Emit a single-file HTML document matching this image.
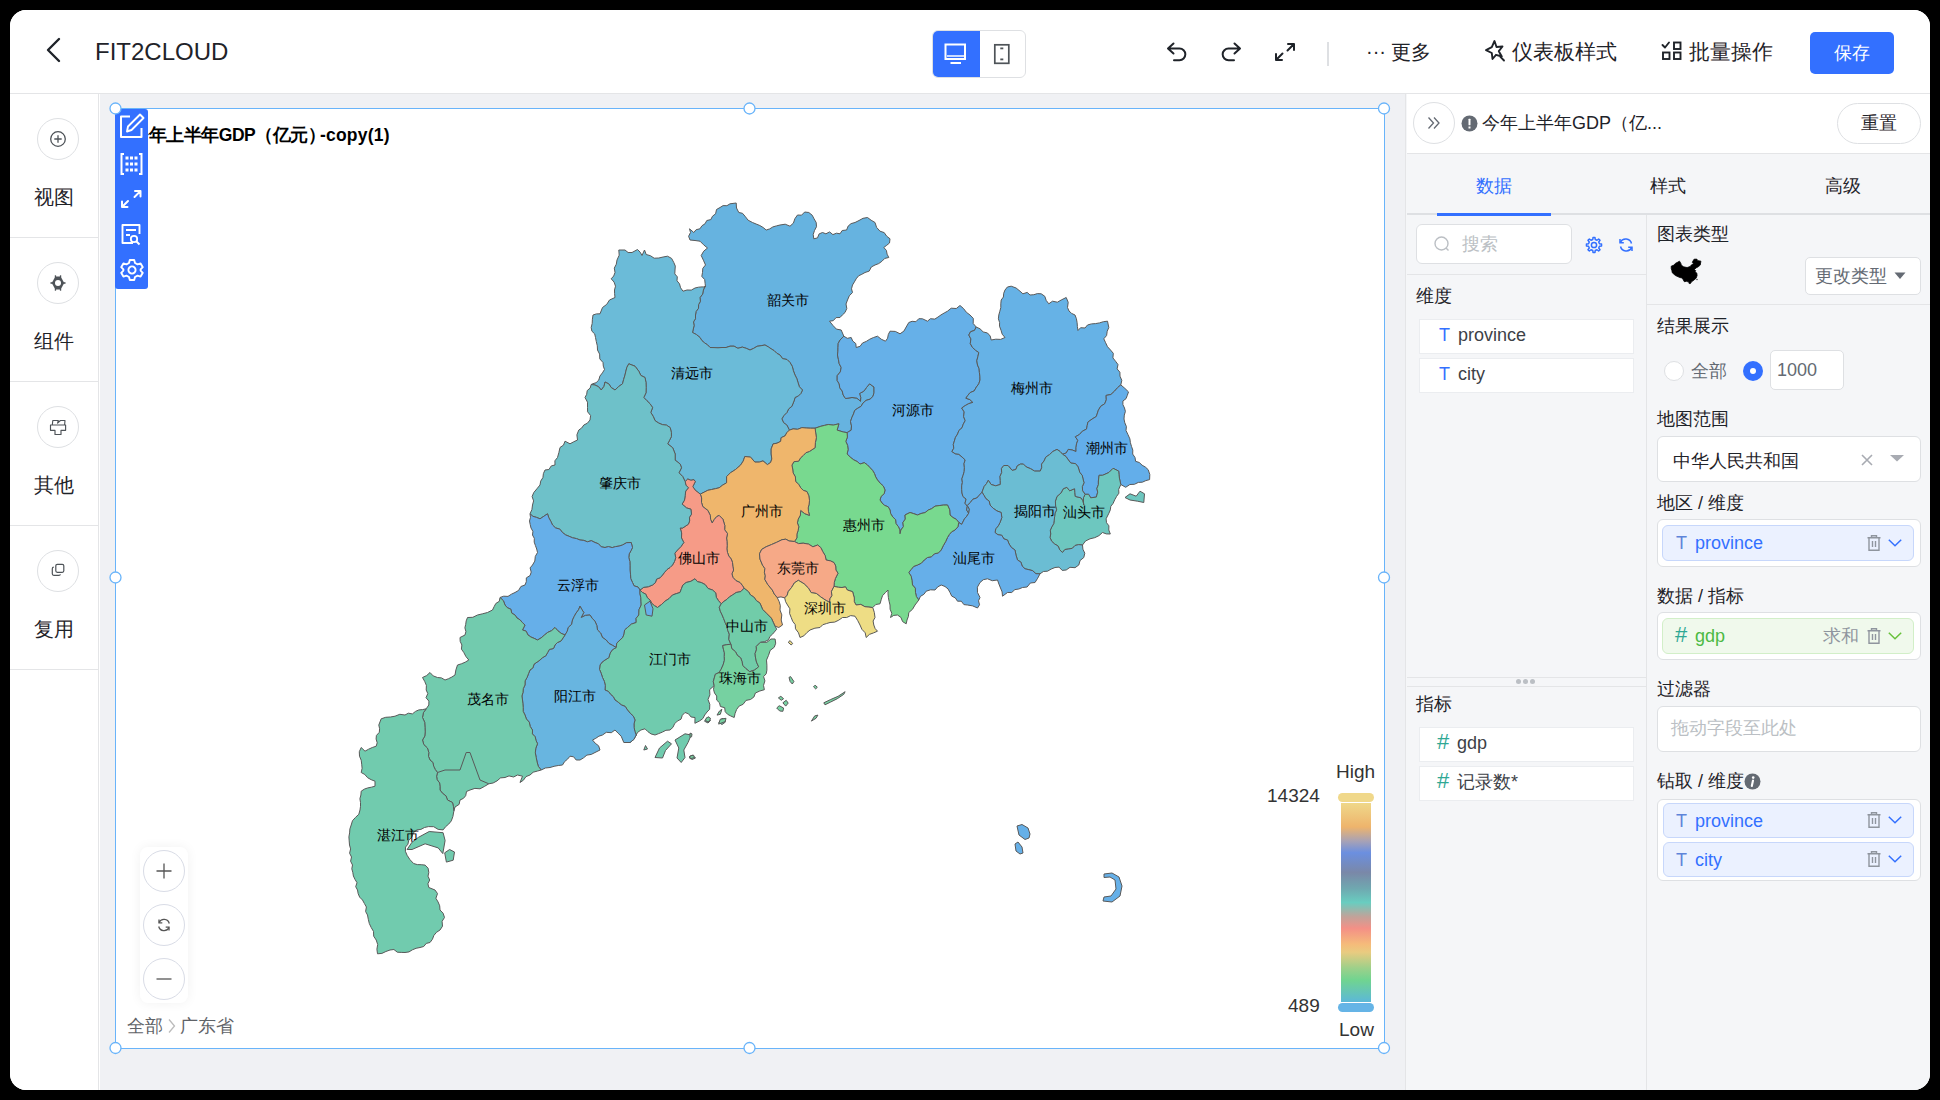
<!DOCTYPE html>
<html><head><meta charset="utf-8">
<style>
*{box-sizing:border-box;margin:0;padding:0}
html,body{width:1940px;height:1100px;background:#000;overflow:hidden;font-family:"Liberation Sans",sans-serif;color:#1f2329}
#app{position:absolute;left:10px;top:10px;width:1920px;height:1080px;background:#fff;border-radius:16px;overflow:hidden}
#in{position:absolute;left:-10px;top:-10px;width:1940px;height:1100px}
.a{position:absolute}
.t{position:absolute;white-space:nowrap;line-height:1}
.cir{position:absolute;border-radius:50%}
</style></head><body>
<div id="app"><div id="in">
<!-- HEADER -->
<div class="a" style="left:0;top:0;width:1940px;height:94px;background:#fff;border-bottom:1px solid #e4e5e7"></div>
<svg class="a" style="left:40px;top:32px" width="28" height="36" viewBox="0 0 28 36"><path d="M19 7 L8 18 L19 29" fill="none" stroke="#1f2329" stroke-width="2.4" stroke-linecap="round" stroke-linejoin="round"/></svg>
<div class="t" style="left:95px;top:40px;font-size:24px;color:#1f2329">FIT2CLOUD</div>
<div class="a" style="left:932px;top:30px;width:94px;height:48px;border:1px solid #dee0e3;border-radius:6px;overflow:hidden;background:#fff">
  <div class="a" style="left:-1px;top:-1px;width:48px;height:48px;background:#3370ff"></div>
</div>
<svg class="a" style="left:944px;top:43px" width="24" height="22" viewBox="0 0 24 22"><rect x="1.5" y="1.5" width="19.5" height="14.5" fill="none" stroke="#fff" stroke-width="2"/><line x1="3" y1="13" x2="20" y2="13" stroke="#fff" stroke-width="1.5"/><rect x="6.5" y="19" width="10.5" height="2" fill="#fff"/></svg>
<svg class="a" style="left:993px;top:43px" width="18" height="22" viewBox="0 0 18 22"><rect x="1.8" y="1.8" width="14" height="18.5" fill="none" stroke="#4e5358" stroke-width="1.7"/><rect x="7.3" y="4.5" width="3" height="1.8" fill="#4e5358"/><rect x="7.3" y="15.5" width="3" height="1.8" fill="#4e5358"/></svg>
<!-- undo redo fullscreen -->
<svg class="a" style="left:1164px;top:40px" width="26" height="24" viewBox="0 0 26 24"><path d="M9.5 3.5 L4 8.5 L9.5 13.5 M4.5 8.5 H15.5 A5.8 5.8 0 0 1 15.5 20.2 H10" fill="none" stroke="#1f2329" stroke-width="2" stroke-linecap="round" stroke-linejoin="round"/></svg>
<svg class="a" style="left:1218px;top:40px" width="26" height="24" viewBox="0 0 26 24"><path d="M16.5 3.5 L22 8.5 L16.5 13.5 M21.5 8.5 H10.5 A5.8 5.8 0 0 0 10.5 20.2 H16" fill="none" stroke="#1f2329" stroke-width="2" stroke-linecap="round" stroke-linejoin="round"/></svg>
<svg class="a" style="left:1272px;top:39px" width="26" height="26" viewBox="0 0 26 26"><path d="M16 5 H22 V11 M22 5 L15.5 11.5 M10 21 H4 V15 M4 21 L10.5 14.5" fill="none" stroke="#1f2329" stroke-width="2" stroke-linecap="round" stroke-linejoin="round"/></svg>
<div class="a" style="left:1327px;top:42px;width:1.5px;height:24px;background:#dee0e3"></div>
<div class="t" style="left:1366px;top:41px;font-size:20px;color:#1f2329">···</div>
<div class="t" style="left:1391px;top:42px;font-size:20px;color:#1f2329">更多</div>
<svg class="a" style="left:1482px;top:38px" width="26" height="26" viewBox="0 0 26 26"><path d="M12.5 3 L14.5 9 L20.5 8.5 L16.8 13.2 L19.8 18.5 L14 16.8 L10.5 21 L9.8 15 L4 12.2 L9.8 9.2 Z M17.5 17.8 L22 22.5" fill="none" stroke="#1f2329" stroke-width="1.9" stroke-linejoin="round" stroke-linecap="round"/></svg>
<div class="t" style="left:1512px;top:42px;font-size:20.5px;color:#1f2329">仪表板样式</div>
<svg class="a" style="left:1660px;top:40px" width="24" height="22" viewBox="0 0 24 22"><path d="M2.5 5 L5 7.5 L9 2.5" fill="none" stroke="#1f2329" stroke-width="1.9" stroke-linecap="round" stroke-linejoin="round"/><rect x="14" y="2.5" width="6.5" height="6.5" fill="none" stroke="#1f2329" stroke-width="1.9"/><rect x="3" y="12.5" width="6.5" height="6.5" fill="none" stroke="#1f2329" stroke-width="1.9"/><rect x="14" y="12.5" width="6.5" height="6.5" fill="none" stroke="#1f2329" stroke-width="1.9"/></svg>
<div class="t" style="left:1689px;top:42px;font-size:20.5px;color:#1f2329">批量操作</div>
<div class="a" style="left:1810px;top:32px;width:84px;height:42px;background:#3370ff;border-radius:5px"></div>
<div class="t" style="left:1834px;top:44px;font-size:18px;color:#fff">保存</div>

<!-- SIDEBAR -->
<div class="a" style="left:0;top:94px;width:99px;height:1006px;background:#fff;border-right:1px solid #e4e5e7"></div>
<div class="a" style="left:10px;top:237px;width:89px;height:1px;background:#e4e5e7"></div>
<div class="a" style="left:10px;top:381px;width:89px;height:1px;background:#e4e5e7"></div>
<div class="a" style="left:10px;top:525px;width:89px;height:1px;background:#e4e5e7"></div>
<div class="a" style="left:10px;top:669px;width:89px;height:1px;background:#e4e5e7"></div>
<div class="cir" style="left:37px;top:118px;width:42px;height:42px;border:1px solid #dee0e3"></div>
<div class="cir" style="left:37px;top:262px;width:42px;height:42px;border:1px solid #dee0e3"></div>
<div class="cir" style="left:37px;top:406px;width:42px;height:42px;border:1px solid #dee0e3"></div>
<div class="cir" style="left:37px;top:550px;width:42px;height:42px;border:1px solid #dee0e3"></div>
<svg class="a" style="left:48px;top:129px" width="20" height="20" viewBox="0 0 20 20"><circle cx="10" cy="10" r="7.3" fill="none" stroke="#4e5358" stroke-width="1.3"/><path d="M10 6.3 V13.7 M6.3 10 H13.7" stroke="#4e5358" stroke-width="1.3"/></svg>
<svg class="a" style="left:48px;top:273px" width="20" height="20" viewBox="0 0 20 20"><path d="M7.3 3.5 H12.7 L16.2 10 L12.7 16.5 H7.3 L3.8 10 Z" fill="#4e5358"/><circle cx="10" cy="10" r="3" fill="#fff"/><rect x="6.8" y="2.3" width="1.3" height="2" fill="#4e5358"/><rect x="11.9" y="2.3" width="1.3" height="2" fill="#4e5358"/><rect x="6.8" y="15.7" width="1.3" height="2" fill="#4e5358"/><rect x="11.9" y="15.7" width="1.3" height="2" fill="#4e5358"/><rect x="2.5" y="9.2" width="2" height="1.6" fill="#4e5358"/><rect x="15.5" y="9.2" width="2" height="1.6" fill="#4e5358"/></svg>
<svg class="a" style="left:48px;top:417px" width="20" height="20" viewBox="0 0 20 20"><path d="M4.3 8 L4.8 3.5 H10.3 L9.6 6.2 L12.4 3.5 H17 L16.6 8 M2.5 8 H17.6 V13.3 H13 V17.5 H7 V13.3 H2.5 Z" fill="none" stroke="#4e5358" stroke-width="1.15" stroke-linejoin="round"/></svg>
<svg class="a" style="left:48px;top:561px" width="20" height="20" viewBox="0 0 20 20"><rect x="7.8" y="3.3" width="8" height="8" rx="1.5" fill="none" stroke="#4e5358" stroke-width="1.2"/><path d="M5.8 6.2 Q4.3 6.2 4.3 7.8 V12.8 Q4.3 14.3 5.8 14.3 H10.8 Q12.3 14.3 12.3 13.2" fill="none" stroke="#4e5358" stroke-width="1.2"/></svg>
<div class="t" style="left:34px;top:187px;font-size:20px;color:#1f2329">视图</div>
<div class="t" style="left:34px;top:331px;font-size:20px;color:#1f2329">组件</div>
<div class="t" style="left:34px;top:475px;font-size:20px;color:#1f2329">其他</div>
<div class="t" style="left:34px;top:619px;font-size:20px;color:#1f2329">复用</div>

<!-- CANVAS -->
<div class="a" style="left:100px;top:94px;width:1306px;height:1006px;background:#f0f1f4"></div>
<div class="a" style="left:115px;top:108px;width:1270px;height:941px;background:#fff;border:1px solid #69b4fa"></div>
<svg class="a" style="left:0;top:0" width="1940" height="1100" viewBox="0 0 1940 1100">
<g stroke="#595959" stroke-width="1" stroke-linejoin="round">
<path fill="#66b3e0" d="M705.5 287.0 L705.1 283.3 L704.7 279.6 L701.8 276.4 L702.5 272.5 L702.8 268.3 L705.5 265.0 L703.4 260.2 L701.2 255.5 L703.7 251.2 L707.5 248.0 L703.6 244.8 L700.0 241.2 L695.0 240.5 L690.0 240.0 L688.6 236.3 L690.5 232.5 L689.5 228.8 L693.8 232.5 L696.1 229.7 L699.9 228.8 L702.0 225.7 L705.0 223.8 L706.8 220.5 L710.8 219.6 L712.5 216.2 L715.6 213.8 L716.5 209.5 L720.0 207.5 L723.1 205.6 L726.9 205.7 L730.0 203.8 L736.2 203.0 L736.5 208.0 L738.8 212.5 L742.5 213.3 L745.0 216.2 L748.1 220.2 L752.5 222.5 L756.1 224.0 L759.8 225.5 L763.2 227.5 L766.2 230.0 L769.7 228.9 L772.9 226.9 L776.4 225.9 L780.0 225.0 L785.2 224.2 L790.0 226.2 L793.4 223.1 L794.9 218.7 L797.5 215.0 L801.5 215.2 L804.7 212.0 L808.8 212.5 L812.2 215.2 L814.1 218.9 L816.2 222.5 L816.5 226.7 L814.5 230.5 L813.2 234.5 L813.8 238.8 L817.5 237.9 L819.1 233.9 L822.5 232.5 L825.9 233.8 L829.6 231.9 L832.9 234.6 L836.5 233.2 L840.0 233.8 L842.2 230.5 L846.6 230.0 L848.2 226.0 L851.1 223.6 L855.0 222.5 L859.0 220.5 L863.0 218.3 L867.5 217.5 L871.1 220.2 L875.0 222.5 L876.6 227.4 L880.0 231.2 L884.2 232.6 L886.7 236.2 L890.0 238.8 L889.5 243.0 L886.7 245.3 L883.8 247.5 L886.4 250.4 L887.1 254.2 L888.8 257.5 L884.8 258.4 L881.9 261.3 L878.7 263.6 L875.0 265.0 L871.3 267.0 L869.2 271.1 L865.0 272.5 L861.8 274.3 L858.6 275.8 L856.2 278.8 L854.4 281.9 L852.5 285.0 L851.5 288.8 L852.5 292.5 L849.3 295.8 L847.5 300.0 L846.0 304.0 L846.8 308.5 L845.0 312.5 L842.4 314.9 L840.0 317.5 L836.1 317.6 L833.2 320.7 L829.5 321.2 L833.0 325.5 L836.4 329.1 L841.2 330.0 L843.8 336.2 L840.0 340.0 L838.2 343.5 L838.0 347.4 L837.9 351.2 L837.5 355.0 L838.4 359.3 L839.2 363.6 L841.2 367.5 L840.3 371.9 L837.2 375.7 L837.2 380.5 L839.2 383.9 L839.8 387.9 L842.2 391.0 L843.2 395.0 L845.5 398.5 L852.0 397.5 L856.8 398.1 L860.5 401.2 L860.7 397.3 L859.5 393.5 L863.8 391.2 L866.6 387.4 L869.5 383.8 L874.0 387.0 L874.0 392.8 L872.9 396.5 L870.0 399.2 L866.1 400.4 L863.0 403.0 L861.1 406.3 L857.8 408.2 L854.7 410.4 L853.5 414.0 L852.0 417.2 L850.5 421.5 L851.5 425.9 L851.2 430.2 L847.1 432.6 L843.3 432.0 L837.1 430.1 L838.9 423.8 L833.3 425.1 L828.3 424.5 L824.5 425.4 L820.8 426.3 L815.1 428.2 L810.7 428.2 L806.3 428.0 L801.9 427.6 L797.7 429.3 L793.1 428.9 L789.4 430.1 L786.9 425.1 L783.5 422.6 L781.9 418.8 L784.0 415.4 L786.9 412.5 L788.7 408.8 L791.9 406.3 L794.4 400.0 L795.0 397.5 L798.4 395.9 L800.9 393.4 L802.5 390.0 L799.4 386.8 L798.1 382.8 L796.9 378.8 L795.0 375.0 L793.4 370.8 L792.3 366.4 L790.0 362.5 L787.0 359.5 L782.5 358.6 L780.0 355.0 L776.8 353.3 L774.2 350.7 L771.1 348.8 L768.2 346.8 L765.0 345.0 L761.1 345.7 L757.1 346.3 L753.6 348.4 L750.0 350.0 L746.2 348.3 L742.3 347.1 L737.9 348.3 L734.1 346.2 L730.0 346.2 L726.1 347.5 L722.0 347.5 L718.0 347.8 L714.0 347.6 L710.0 347.5 L707.6 344.9 L704.6 342.9 L701.9 340.6 L700.0 337.5 L696.5 334.6 L692.5 332.5 L693.3 329.0 L694.1 325.6 L693.5 321.9 L695.5 318.6 L695.5 315.0 L696.1 311.4 L698.5 308.3 L698.6 304.6 L700.4 301.3 L700.0 297.5 L702.6 294.2 L703.4 290.0 L705.0 286.2Z"/>
<path fill="#6bbbd8" d="M705.0 286.2 L703.4 290.0 L702.6 294.2 L700.0 297.5 L700.4 301.3 L698.6 304.6 L698.5 308.3 L696.1 311.4 L695.5 315.0 L695.5 318.6 L693.5 321.9 L694.1 325.6 L693.3 329.0 L692.5 332.5 L696.5 334.6 L700.0 337.5 L701.9 340.6 L704.6 342.9 L707.6 344.9 L710.0 347.5 L714.0 347.6 L718.0 347.8 L722.0 347.5 L726.1 347.5 L730.0 346.2 L734.1 346.2 L737.9 348.3 L742.3 347.1 L746.2 348.3 L750.0 350.0 L753.6 348.4 L757.1 346.3 L761.1 345.7 L765.0 345.0 L768.2 346.8 L771.1 348.8 L774.2 350.7 L776.8 353.3 L780.0 355.0 L782.5 358.6 L787.0 359.5 L790.0 362.5 L792.3 366.4 L793.4 370.8 L795.0 375.0 L796.9 378.8 L798.1 382.8 L799.4 386.8 L802.5 390.0 L800.9 393.4 L798.4 395.9 L795.0 397.5 L794.4 400.0 L791.9 406.3 L788.7 408.8 L786.9 412.5 L784.0 415.4 L781.9 418.8 L783.5 422.6 L786.9 425.1 L789.4 430.1 L786.9 432.6 L784.9 436.0 L781.2 437.6 L780.6 441.4 L777.0 443.2 L773.1 443.9 L771.2 448.9 L771.2 454.0 L771.8 459.0 L770.6 462.5 L767.4 464.6 L763.0 460.9 L759.3 462.1 L754.9 462.1 L750.5 457.1 L744.8 456.5 L743.2 461.1 L740.5 465.2 L735.4 469.6 L730.4 472.8 L726.6 476.5 L726.6 482.8 L722.7 485.1 L719.1 487.8 L715.4 488.7 L711.6 489.5 L707.8 490.3 L704.1 492.2 L700.3 494.1 L695.3 490.3 L692.8 486.6 L695.3 481.6 L694.0 479.7 L690.9 480.3 L687.8 479.0 L685.2 481.6 L682.7 476.5 L679.0 472.8 L681.5 467.8 L680.2 464.0 L675.2 460.2 L675.2 454.0 L672.7 447.7 L667.7 443.9 L669.6 440.2 L671.4 436.6 L671.4 432.6 L670.2 427.6 L666.4 425.1 L662.3 424.6 L658.6 423.0 L655.1 420.7 L653.2 416.3 L650.8 412.5 L652.6 407.6 L650.1 403.8 L646.9 400.7 L643.8 397.5 L646.0 392.8 L646.2 387.5 L646.0 382.5 L645.0 377.5 L640.8 375.4 L638.8 371.2 L635.0 366.2 L628.8 363.8 L626.9 367.3 L625.9 371.1 L625.0 375.0 L623.7 379.3 L622.5 383.8 L618.6 386.6 L615.0 390.0 L611.2 387.5 L608.8 383.9 L605.0 382.0 L604.0 386.4 L601.2 390.0 L598.7 386.8 L595.0 385.0 L591.2 384.5 L592.5 383.8 L596.1 382.7 L598.8 380.0 L599.9 376.1 L602.4 372.9 L604.5 369.5 L603.3 366.1 L603.0 362.5 L599.8 358.9 L599.6 354.1 L597.5 350.0 L597.3 345.8 L596.3 341.6 L595.5 337.5 L594.7 333.9 L591.9 331.2 L591.2 327.5 L592.2 323.4 L592.4 319.2 L593.0 315.0 L596.4 313.9 L600.0 313.8 L602.5 307.5 L606.7 304.4 L609.5 300.0 L615.0 297.5 L614.6 293.7 L614.5 290.0 L615.5 286.2 L614.1 282.1 L611.2 278.8 L613.7 276.0 L615.0 272.5 L614.3 268.1 L616.3 264.2 L617.0 260.0 L619.2 255.2 L618.8 250.0 L625.0 250.0 L628.1 252.5 L632.0 252.5 L637.5 249.5 L640.2 252.2 L642.0 255.5 L644.5 250.0 L646.2 254.5 L650.4 255.7 L654.2 258.2 L658.8 258.0 L663.1 257.0 L667.5 256.2 L671.6 258.4 L673.8 262.5 L675.3 266.1 L675.0 270.0 L674.8 273.9 L677.3 276.8 L677.0 280.8 L679.5 283.8 L680.6 287.8 L683.0 291.2 L687.0 290.0 L691.3 290.1 L695.0 288.0 L698.5 287.2 L702.0 286.9 L705.5 287.0Z"/>
<path fill="#66b0e8" d="M843.8 336.2 L847.3 338.3 L851.2 337.5 L852.7 341.0 L855.8 343.6 L856.2 347.5 L860.1 346.3 L862.5 343.0 L866.3 341.4 L869.8 339.2 L873.5 337.5 L877.5 336.2 L881.2 339.2 L885.5 341.2 L887.6 338.2 L888.3 334.5 L890.0 331.2 L895.3 331.4 L900.0 333.8 L903.9 331.1 L906.2 327.0 L908.8 322.5 L912.1 321.3 L915.9 321.7 L918.8 318.7 L922.5 318.8 L927.5 321.2 L930.4 318.7 L934.8 319.1 L937.9 317.1 L941.0 314.9 L944.2 313.0 L947.5 311.2 L951.2 308.2 L956.3 308.5 L960.0 305.5 L963.5 308.5 L966.3 312.2 L970.0 315.0 L973.3 318.4 L973.2 323.5 L976.2 327.0 L974.5 330.4 L970.6 331.7 L968.8 335.0 L970.9 338.9 L970.3 343.6 L972.5 347.5 L975.5 350.2 L978.8 352.5 L977.9 356.6 L976.8 360.7 L977.5 365.0 L979.1 368.6 L979.4 372.4 L979.9 376.2 L980.0 380.0 L978.8 383.8 L976.4 387.0 L974.2 390.9 L970.1 392.6 L967.9 395.3 L965.9 398.2 L969.9 399.6 L972.9 402.4 L968.8 403.6 L965.2 405.6 L961.7 408.0 L964.2 411.9 L963.6 416.6 L965.2 420.7 L963.3 424.1 L962.0 427.8 L958.9 430.5 L957.6 434.0 L955.5 437.3 L954.4 440.9 L953.3 444.5 L953.8 448.2 L951.9 451.5 L955.1 453.7 L958.9 454.3 L962.1 457.1 L965.2 459.9 L964.0 463.7 L964.4 467.7 L964.2 471.6 L963.1 475.3 L961.9 478.8 L962.4 482.4 L961.7 485.8 L961.7 489.4 L962.0 493.0 L962.9 496.4 L966.1 499.1 L965.0 503.2 L967.3 506.2 L966.6 510.0 L968.7 513.2 L966.8 516.2 L964.5 518.8 L961.7 524.4 L958.8 522.5 L956.4 519.4 L952.9 517.5 L950.0 515.0 L949.7 509.8 L947.5 505.0 L943.3 505.1 L939.1 505.6 L935.0 506.2 L931.8 508.6 L928.2 510.1 L925.1 512.6 L921.1 513.5 L917.5 515.0 L913.8 513.7 L910.0 512.5 L905.0 515.0 L905.3 519.1 L902.9 522.5 L903.4 526.6 L900.9 530.0 L900.0 533.8 L899.8 529.8 L898.3 526.5 L895.9 523.5 L895.6 519.6 L892.7 516.9 L890.7 513.7 L890.0 510.0 L888.2 506.8 L884.6 505.4 L882.0 503.0 L880.0 500.0 L881.1 496.4 L884.2 493.7 L885.0 490.0 L883.3 486.0 L880.2 483.2 L877.5 480.0 L875.7 476.9 L874.4 473.4 L872.5 470.3 L870.0 467.7 L867.5 465.0 L864.4 462.7 L860.1 464.0 L857.1 461.5 L853.8 459.9 L850.9 457.7 L847.1 454.0 L848.1 449.6 L847.6 445.4 L845.8 441.4 L847.4 437.1 L847.1 432.6 L851.2 430.2 L851.5 425.9 L850.5 421.5 L852.0 417.2 L853.5 414.0 L854.7 410.4 L857.8 408.2 L861.1 406.3 L863.0 403.0 L866.1 400.4 L870.0 399.2 L872.9 396.5 L874.0 392.8 L874.0 387.0 L869.5 383.8 L866.6 387.4 L863.8 391.2 L859.5 393.5 L860.7 397.3 L860.5 401.2 L856.8 398.1 L852.0 397.5 L845.5 398.5 L843.2 395.0 L842.2 391.0 L839.8 387.9 L839.2 383.9 L837.2 380.5 L837.2 375.7 L840.3 371.9 L841.2 367.5 L839.2 363.6 L838.4 359.3 L837.5 355.0 L837.9 351.2 L838.0 347.4 L838.2 343.5 L840.0 340.0 L843.8 336.2Z"/>
<path fill="#66b2e6" d="M976.2 327.0 L980.0 328.8 L983.2 331.9 L987.5 333.0 L990.2 336.0 L991.2 340.0 L995.8 339.2 L1000.6 339.4 L1005.0 337.5 L1002.2 334.2 L1001.0 330.2 L999.5 326.2 L999.6 322.5 L998.4 318.8 L998.8 315.0 L999.8 311.3 L1000.8 307.6 L1000.8 303.8 L1001.2 300.0 L1003.4 297.0 L1003.7 293.3 L1005.0 290.0 L1007.4 287.0 L1011.2 286.2 L1016.1 288.0 L1020.0 291.2 L1022.9 293.8 L1027.2 292.4 L1030.0 295.0 L1033.8 294.7 L1037.4 293.6 L1041.2 293.8 L1044.8 296.3 L1046.2 300.4 L1048.8 303.8 L1052.5 301.2 L1057.4 302.2 L1061.2 300.0 L1066.2 297.5 L1068.2 302.3 L1067.5 307.5 L1069.0 311.0 L1071.6 313.4 L1075.0 315.0 L1076.4 318.7 L1077.1 322.6 L1077.4 326.6 L1078.0 330.5 L1080.6 327.7 L1085.0 328.0 L1087.5 325.0 L1091.4 323.9 L1095.5 323.6 L1099.5 322.9 L1103.4 321.7 L1107.5 321.2 L1108.8 327.5 L1107.2 331.3 L1106.6 335.5 L1103.8 338.8 L1105.6 342.7 L1107.5 346.7 L1110.5 350.0 L1113.3 353.3 L1112.9 357.9 L1115.5 361.2 L1118.0 364.6 L1117.1 368.9 L1119.9 372.2 L1120.0 376.2 L1121.8 380.4 L1120.8 384.9 L1117.4 387.8 L1114.5 391.2 L1110.9 394.5 L1106.1 395.4 L1106.3 399.8 L1104.7 403.8 L1100.8 406.2 L1098.4 410.1 L1096.3 416.5 L1092.0 419.1 L1087.9 422.1 L1087.2 425.6 L1086.5 429.1 L1082.4 431.2 L1079.3 434.6 L1075.3 436.8 L1077.8 440.3 L1076.5 443.9 L1076.0 447.7 L1076.0 451.5 L1072.2 450.0 L1068.3 449.4 L1066.3 452.9 L1062.6 454.3 L1060.1 451.5 L1057.0 449.4 L1052.8 451.5 L1049.5 454.6 L1045.8 457.1 L1044.1 460.9 L1041.6 464.1 L1041.7 467.8 L1040.2 471.1 L1034.6 471.1 L1030.6 468.7 L1026.2 466.9 L1023.4 464.1 L1020.6 464.1 L1017.4 465.7 L1015.8 469.5 L1012.2 470.4 L1008.0 465.5 L1003.8 465.5 L1001.4 468.6 L1001.7 472.5 L1000.0 476.4 L1000.3 480.4 L1000.3 484.5 L995.7 485.8 L991.1 484.5 L988.3 480.3 L986.5 483.6 L984.1 486.6 L982.0 492.2 L979.4 495.1 L976.8 498.0 L972.9 499.2 L970.3 502.5 L967.3 505.5 L969.4 509.1 L968.7 513.2 L966.6 510.0 L967.3 506.2 L965.0 503.2 L966.1 499.1 L962.9 496.4 L962.0 493.0 L961.7 489.4 L961.7 485.8 L962.4 482.4 L961.9 478.8 L963.1 475.3 L964.2 471.6 L964.4 467.7 L964.0 463.7 L965.2 459.9 L962.1 457.1 L958.9 454.3 L955.1 453.7 L951.9 451.5 L953.8 448.2 L953.3 444.5 L954.4 440.9 L955.5 437.3 L957.6 434.0 L958.9 430.5 L962.0 427.8 L963.3 424.1 L965.2 420.7 L963.6 416.6 L964.2 411.9 L961.7 408.0 L965.2 405.6 L968.8 403.6 L972.9 402.4 L969.9 399.6 L965.9 398.2 L967.9 395.3 L970.1 392.6 L974.2 390.9 L976.4 387.0 L978.8 383.8 L980.0 380.0 L979.9 376.2 L979.4 372.4 L979.1 368.6 L977.5 365.0 L976.8 360.7 L977.9 356.6 L978.8 352.5 L975.5 350.2 L972.5 347.5 L970.3 343.6 L970.9 338.9 L968.8 335.0 L970.6 331.7 L974.5 330.4 L976.2 327.0Z"/>
<path fill="#63aeea" d="M1120.8 384.9 L1124.8 388.3 L1128.5 391.9 L1127.3 395.4 L1126.0 398.7 L1122.9 401.0 L1122.9 404.6 L1124.5 408.0 L1125.4 411.4 L1124.3 415.1 L1124.0 419.0 L1124.8 422.8 L1126.4 426.5 L1126.0 430.5 L1128.0 434.7 L1129.9 438.9 L1130.4 442.7 L1131.5 446.4 L1132.8 450.1 L1132.7 454.1 L1135.0 457.5 L1135.6 461.3 L1139.3 462.5 L1142.1 465.2 L1145.4 467.1 L1148.2 469.7 L1149.8 474.5 L1149.6 479.6 L1145.9 480.6 L1142.3 482.2 L1138.4 482.4 L1134.4 484.3 L1129.9 484.5 L1125.7 487.3 L1120.8 484.5 L1119.4 478.1 L1119.0 474.7 L1118.7 471.1 L1113.1 468.3 L1108.9 472.5 L1102.6 475.3 L1099.1 475.3 L1098.4 481.0 L1098.4 484.7 L1096.9 488.4 L1097.7 492.2 L1096.3 497.1 L1090.7 497.8 L1088.6 494.3 L1085.1 494.3 L1082.6 490.8 L1082.3 486.6 L1084.0 482.8 L1083.0 478.9 L1082.2 475.3 L1079.8 472.5 L1078.1 466.9 L1075.5 463.6 L1070.9 463.1 L1068.3 459.9 L1066.0 456.5 L1062.6 454.3 L1066.3 452.9 L1068.3 449.4 L1072.2 450.0 L1076.0 451.5 L1076.0 447.7 L1076.5 443.9 L1077.8 440.3 L1075.3 436.8 L1079.3 434.6 L1082.4 431.2 L1086.5 429.1 L1087.2 425.6 L1087.9 422.1 L1092.0 419.1 L1096.3 416.5 L1098.4 410.1 L1100.8 406.2 L1104.7 403.8 L1106.3 399.8 L1106.1 395.4 L1110.9 394.5 L1114.5 391.2 L1117.4 387.8 L1120.8 384.9Z"/>
<path fill="#6dc7bf" d="M1120.8 484.5 L1118.7 489.4 L1118.9 493.2 L1116.6 496.4 L1114.7 499.8 L1113.1 503.4 L1110.8 506.3 L1110.3 509.9 L1108.9 513.2 L1106.1 518.8 L1106.5 522.7 L1108.9 525.8 L1108.8 530.0 L1110.3 534.0 L1106.3 533.9 L1102.5 532.5 L1098.9 535.7 L1094.7 537.7 L1090.0 538.8 L1085.5 541.0 L1082.5 545.0 L1078.7 544.6 L1075.0 545.5 L1072.4 548.3 L1068.7 549.0 L1064.9 549.5 L1062.5 552.5 L1059.7 549.8 L1058.1 546.0 L1054.5 543.9 L1051.6 541.2 L1050.0 537.5 L1050.7 534.0 L1050.3 530.2 L1051.8 526.9 L1053.7 523.7 L1054.2 520.2 L1054.6 516.7 L1055.0 513.2 L1056.6 509.8 L1055.6 506.2 L1055.4 501.1 L1057.0 496.4 L1060.9 493.1 L1063.3 488.7 L1066.9 487.3 L1069.7 490.8 L1074.6 488.7 L1074.9 492.5 L1075.3 496.4 L1080.9 497.8 L1083.2 500.9 L1083.7 504.8 L1083.3 501.2 L1083.5 497.6 L1085.1 494.3 L1088.6 494.3 L1090.7 497.8 L1096.3 497.1 L1097.7 492.2 L1096.9 488.4 L1098.4 484.7 L1098.4 481.0 L1099.1 475.3 L1102.6 475.3 L1108.9 472.5 L1113.1 468.3 L1118.7 471.1 L1119.0 474.7 L1119.4 478.1 L1120.8 484.5Z"/>
<path fill="#6bbdd3" d="M982.0 492.2 L984.1 486.6 L986.5 483.6 L988.3 480.3 L991.1 484.5 L995.7 485.8 L1000.3 484.5 L1000.3 480.4 L1000.0 476.4 L1001.7 472.5 L1001.4 468.6 L1003.8 465.5 L1008.0 465.5 L1012.2 470.4 L1015.8 469.5 L1017.4 465.7 L1020.6 464.1 L1023.4 464.1 L1026.2 466.9 L1030.6 468.7 L1034.6 471.1 L1040.2 471.1 L1041.7 467.8 L1041.6 464.1 L1044.1 460.9 L1045.8 457.1 L1049.5 454.6 L1052.8 451.5 L1057.0 449.4 L1060.1 451.5 L1062.6 454.3 L1066.0 456.5 L1068.3 459.9 L1070.9 463.1 L1075.5 463.6 L1078.1 466.9 L1079.8 472.5 L1082.2 475.3 L1083.0 478.9 L1084.0 482.8 L1082.3 486.6 L1082.6 490.8 L1085.1 494.3 L1083.5 497.6 L1083.3 501.2 L1083.7 504.8 L1083.2 500.9 L1080.9 497.8 L1075.3 496.4 L1074.9 492.5 L1074.6 488.7 L1069.7 490.8 L1066.9 487.3 L1063.3 488.7 L1060.9 493.1 L1057.0 496.4 L1055.4 501.1 L1055.6 506.2 L1056.6 509.8 L1055.0 513.2 L1054.6 516.7 L1054.2 520.2 L1053.7 523.7 L1051.8 526.9 L1050.3 530.2 L1050.7 534.0 L1050.0 537.5 L1051.6 541.2 L1054.5 543.9 L1058.1 546.0 L1059.7 549.8 L1062.5 552.5 L1064.9 549.5 L1068.7 549.0 L1072.4 548.3 L1075.0 545.5 L1078.7 544.6 L1082.5 545.0 L1082.9 549.2 L1084.8 553.2 L1083.8 557.5 L1080.1 560.5 L1078.8 565.0 L1075.0 567.7 L1070.0 567.3 L1066.2 570.0 L1062.2 570.4 L1059.0 567.1 L1055.0 567.5 L1051.1 569.1 L1047.5 571.2 L1043.4 571.5 L1040.0 573.8 L1035.9 573.7 L1032.7 570.7 L1028.9 569.7 L1025.0 568.8 L1022.2 566.1 L1020.9 562.1 L1017.5 560.0 L1016.0 555.1 L1015.0 550.0 L1011.4 547.5 L1009.1 544.0 L1007.5 540.0 L1003.9 538.9 L1001.8 535.3 L997.9 534.7 L995.0 532.5 L995.8 528.7 L998.3 525.8 L1000.0 522.5 L1001.8 517.6 L1001.2 512.5 L996.9 510.9 L993.2 508.3 L990.0 505.0 L989.2 501.1 L985.9 498.7 L984.0 495.4 L982.0 492.2Z"/>
<path fill="#66afe9" d="M958.8 522.5 L961.7 524.4 L964.5 518.8 L966.8 516.2 L968.7 513.2 L969.4 509.1 L967.3 505.5 L970.3 502.5 L972.9 499.2 L976.8 498.0 L979.4 495.1 L982.0 492.2 L984.0 495.4 L985.9 498.7 L989.2 501.1 L990.0 505.0 L993.2 508.3 L996.9 510.9 L1001.2 512.5 L1001.8 517.6 L1000.0 522.5 L998.3 525.8 L995.8 528.7 L995.0 532.5 L997.9 534.7 L1001.8 535.3 L1003.9 538.9 L1007.5 540.0 L1009.1 544.0 L1011.4 547.5 L1015.0 550.0 L1016.0 555.1 L1017.5 560.0 L1020.9 562.1 L1022.2 566.1 L1025.0 568.8 L1028.9 569.7 L1032.7 570.7 L1035.9 573.7 L1040.0 573.8 L1037.7 578.2 L1035.0 582.5 L1030.4 583.0 L1027.1 587.0 L1022.5 587.5 L1018.8 589.0 L1014.9 589.6 L1011.7 592.5 L1007.5 592.5 L1002.5 596.2 L1002.1 591.9 L1000.5 588.0 L998.9 584.0 L997.5 580.0 L992.3 580.7 L987.5 578.8 L983.3 579.7 L980.0 582.5 L977.4 587.2 L977.5 592.5 L980.0 597.5 L978.5 600.8 L979.5 604.8 L977.5 608.0 L972.7 605.9 L967.5 605.0 L963.9 604.6 L961.3 601.2 L957.5 601.2 L955.4 598.0 L951.7 596.1 L950.0 592.5 L948.0 588.9 L945.0 586.5 L941.2 585.0 L937.7 586.9 L935.0 590.0 L930.5 589.8 L926.2 591.2 L923.9 594.3 L920.4 596.4 L918.8 600.0 L916.4 596.6 L915.5 592.6 L915.3 588.2 L912.5 585.0 L912.0 580.6 L911.2 576.3 L908.8 572.5 L911.2 569.4 L913.7 566.4 L917.5 565.0 L921.3 563.2 L924.2 560.0 L927.5 557.5 L931.5 556.7 L934.4 553.8 L938.4 552.9 L941.2 550.0 L943.2 545.8 L945.6 541.7 L947.5 537.5 L949.4 534.4 L951.7 531.7 L955.0 530.0 L957.9 526.8 L958.8 522.5Z"/>
<path fill="#78d98f" d="M815.1 428.2 L820.8 426.3 L824.5 425.4 L828.3 424.5 L833.3 425.1 L838.9 423.8 L837.1 430.1 L843.3 432.0 L847.1 432.6 L847.4 437.1 L845.8 441.4 L847.6 445.4 L848.1 449.6 L847.1 454.0 L850.9 457.7 L853.8 459.9 L857.1 461.5 L860.1 464.0 L864.4 462.7 L867.5 465.0 L870.0 467.7 L872.5 470.3 L874.4 473.4 L875.7 476.9 L877.5 480.0 L880.2 483.2 L883.3 486.0 L885.0 490.0 L884.2 493.7 L881.1 496.4 L880.0 500.0 L882.0 503.0 L884.6 505.4 L888.2 506.8 L890.0 510.0 L890.7 513.7 L892.7 516.9 L895.6 519.6 L895.9 523.5 L898.3 526.5 L899.8 529.8 L900.0 533.8 L900.9 530.0 L903.4 526.6 L902.9 522.5 L905.3 519.1 L905.0 515.0 L910.0 512.5 L913.8 513.7 L917.5 515.0 L921.1 513.5 L925.1 512.6 L928.2 510.1 L931.8 508.6 L935.0 506.2 L939.1 505.6 L943.3 505.1 L947.5 505.0 L949.7 509.8 L950.0 515.0 L952.9 517.5 L956.4 519.4 L958.8 522.5 L957.9 526.8 L955.0 530.0 L951.7 531.7 L949.4 534.4 L947.5 537.5 L945.6 541.7 L943.2 545.8 L941.2 550.0 L938.4 552.9 L934.4 553.8 L931.5 556.7 L927.5 557.5 L924.2 560.0 L921.3 563.2 L917.5 565.0 L913.7 566.4 L911.2 569.4 L908.8 572.5 L911.2 576.3 L912.0 580.6 L912.5 585.0 L915.3 588.2 L915.5 592.6 L916.4 596.6 L918.8 600.0 L915.0 605.0 L912.5 609.3 L908.8 612.5 L908.4 616.4 L907.0 620.0 L906.2 623.8 L902.6 621.6 L900.9 617.4 L897.5 615.0 L893.7 615.4 L890.5 617.5 L891.8 613.3 L890.1 609.2 L890.0 605.0 L889.1 601.3 L888.4 597.6 L888.0 593.8 L888.0 590.0 L885.5 592.5 L882.5 595.7 L881.2 599.7 L880.0 603.8 L875.8 604.5 L872.8 607.5 L868.9 607.1 L864.9 606.7 L860.8 604.4 L856.1 605.0 L854.3 601.7 L854.3 597.9 L852.6 591.7 L847.3 590.0 L845.5 586.9 L842.0 587.5 L838.5 587.3 L834.0 586.4 L834.3 582.4 L835.4 578.5 L838.0 573.2 L835.9 570.0 L835.7 566.0 L834.0 562.6 L830.5 560.9 L826.1 560.0 L825.2 555.6 L822.8 551.7 L820.8 547.6 L817.7 545.0 L812.9 546.8 L808.5 544.1 L803.2 543.2 L798.5 543.6 L794.4 541.5 L796.9 538.0 L796.9 534.2 L798.1 530.5 L798.8 526.8 L797.4 522.9 L798.2 519.2 L800.4 515.1 L800.7 510.4 L804.7 513.6 L809.5 515.4 L808.5 511.7 L808.2 507.9 L809.1 504.2 L809.5 500.4 L808.8 495.8 L807.0 491.6 L803.4 490.4 L800.7 487.8 L798.7 484.3 L795.7 481.6 L795.4 476.9 L793.1 472.8 L792.7 469.0 L791.9 465.2 L793.9 461.7 L798.6 461.2 L800.7 457.7 L803.4 455.4 L805.9 452.7 L809.5 451.4 L815.1 447.7 L815.4 442.6 L816.4 437.6 L815.7 432.9 L815.1 428.2Z"/>
<path fill="#efb66c" d="M789.4 430.1 L793.1 428.9 L797.7 429.3 L801.9 427.6 L806.3 428.0 L810.7 428.2 L815.1 428.2 L815.7 432.9 L816.4 437.6 L815.4 442.6 L815.1 447.7 L809.5 451.4 L805.9 452.7 L803.4 455.4 L800.7 457.7 L798.6 461.2 L793.9 461.7 L791.9 465.2 L792.7 469.0 L793.1 472.8 L795.4 476.9 L795.7 481.6 L798.7 484.3 L800.7 487.8 L803.4 490.4 L807.0 491.6 L808.8 495.8 L809.5 500.4 L809.1 504.2 L808.2 507.9 L808.5 511.7 L809.5 515.4 L804.7 513.6 L800.7 510.4 L800.4 515.1 L798.2 519.2 L797.4 522.9 L798.8 526.8 L798.1 530.5 L796.9 534.2 L796.9 538.0 L794.4 541.5 L789.1 541.0 L785.8 539.2 L782.0 539.7 L776.7 542.3 L771.4 544.6 L766.1 546.8 L761.7 549.4 L759.5 553.8 L760.0 559.1 L762.6 565.3 L764.9 568.5 L764.4 572.3 L765.3 575.8 L764.8 579.4 L767.9 584.7 L772.3 590.0 L774.3 594.0 L777.2 597.5 L779.1 601.4 L780.3 605.5 L780.0 610.0 L781.8 614.9 L781.2 620.0 L782.5 625.0 L778.8 627.5 L775.0 626.2 L773.2 622.2 L771.4 618.2 L767.0 613.8 L762.6 609.4 L760.0 603.2 L756.4 600.6 L753.8 597.0 L750.5 595.0 L748.5 591.7 L744.1 588.2 L742.2 585.2 L740.0 582.5 L736.0 580.7 L733.0 577.5 L731.9 573.8 L733.6 570.0 L732.8 566.2 L732.5 562.5 L731.2 559.0 L728.8 556.0 L727.5 552.5 L726.9 548.9 L727.2 545.3 L727.0 541.6 L726.6 538.0 L727.5 533.6 L724.7 529.8 L724.8 525.5 L722.9 519.2 L719.1 515.4 L716.6 516.7 L714.2 519.6 L712.2 523.0 L710.6 519.4 L710.3 515.4 L707.8 510.4 L702.8 506.6 L701.5 502.4 L701.6 497.9 L700.3 494.1 L704.1 492.2 L707.8 490.3 L711.6 489.5 L715.4 488.7 L719.1 487.8 L722.7 485.1 L726.6 482.8 L726.6 476.5 L730.4 472.8 L735.4 469.6 L740.5 465.2 L743.2 461.1 L744.8 456.5 L750.5 457.1 L754.9 462.1 L759.3 462.1 L763.0 460.9 L767.4 464.6 L770.6 462.5 L771.8 459.0 L771.2 454.0 L771.2 448.9 L773.1 443.9 L777.0 443.2 L780.6 441.4 L781.2 437.6 L784.9 436.0 L786.9 432.6 L789.4 430.1Z"/>
<path fill="#f6a987" d="M777.2 597.5 L774.3 594.0 L772.3 590.0 L767.9 584.7 L764.8 579.4 L765.3 575.8 L764.4 572.3 L764.9 568.5 L762.6 565.3 L760.0 559.1 L759.5 553.8 L761.7 549.4 L766.1 546.8 L771.4 544.6 L776.7 542.3 L782.0 539.7 L785.8 539.2 L789.1 541.0 L794.4 541.5 L798.5 543.6 L803.2 543.2 L808.5 544.1 L812.9 546.8 L817.7 545.0 L820.8 547.6 L822.8 551.7 L825.2 555.6 L826.1 560.0 L830.5 560.9 L834.0 562.6 L835.7 566.0 L835.9 570.0 L838.0 573.2 L835.4 578.5 L834.3 582.4 L834.0 586.4 L831.4 591.7 L832.0 595.5 L830.0 598.7 L829.6 602.3 L826.1 600.5 L820.8 597.0 L816.4 593.5 L811.1 592.6 L808.5 588.2 L804.1 583.8 L798.3 580.3 L794.4 582.9 L791.7 587.3 L788.2 591.7 L787.2 595.2 L784.7 597.9 L781.0 596.9 L777.2 597.5Z"/>
<path fill="#eedd85" d="M784.7 597.9 L787.2 595.2 L788.2 591.7 L791.7 587.3 L794.4 582.9 L798.3 580.3 L804.1 583.8 L808.5 588.2 L811.1 592.6 L816.4 593.5 L820.8 597.0 L826.1 600.5 L829.6 602.3 L830.0 598.7 L832.0 595.5 L831.4 591.7 L834.0 586.4 L838.5 587.3 L842.0 587.5 L845.5 586.9 L847.3 590.0 L852.6 591.7 L854.3 597.9 L854.3 601.7 L856.1 605.0 L860.8 604.4 L864.9 606.7 L868.9 607.1 L872.8 607.6 L874.3 612.4 L875.0 617.5 L873.1 621.0 L873.8 625.0 L875.1 628.5 L877.5 631.2 L873.5 632.9 L869.4 634.4 L866.2 637.5 L865.2 632.8 L861.9 629.3 L860.0 625.0 L857.7 620.5 L855.0 616.2 L850.7 615.6 L846.7 617.5 L842.5 617.5 L838.7 620.2 L834.7 622.1 L830.0 622.5 L826.4 623.6 L822.8 624.7 L820.0 627.5 L814.9 628.2 L810.0 630.0 L806.8 632.7 L803.9 635.8 L800.0 637.5 L798.5 632.8 L795.5 628.8 L795.2 624.6 L792.7 621.3 L791.2 617.5 L789.6 613.5 L789.9 608.8 L787.5 605.0 L785.6 601.7 L784.7 597.9Z"/>
<path fill="#f69b87" d="M685.2 481.6 L687.8 479.0 L690.9 480.3 L694.0 479.7 L695.3 481.6 L692.8 486.6 L695.3 490.3 L700.3 494.1 L701.6 497.9 L701.5 502.4 L702.8 506.6 L707.8 510.4 L710.3 515.4 L710.6 519.4 L712.2 523.0 L714.2 519.6 L716.6 516.7 L719.1 515.4 L722.9 519.2 L724.8 525.5 L724.7 529.8 L727.5 533.6 L726.6 538.0 L727.0 541.6 L727.2 545.3 L726.9 548.9 L727.5 552.5 L728.8 556.0 L731.2 559.0 L732.5 562.5 L732.8 566.2 L733.6 570.0 L731.9 573.8 L733.0 577.5 L736.0 580.7 L740.0 582.5 L742.2 585.2 L744.1 588.2 L740.9 591.6 L736.2 592.5 L732.5 595.0 L729.4 596.9 L726.9 599.4 L723.9 601.4 L721.2 603.8 L718.5 600.7 L716.3 597.3 L715.7 592.8 L712.5 590.0 L708.1 588.5 L705.2 584.6 L701.2 582.5 L697.5 581.7 L695.0 578.8 L690.9 581.3 L686.2 582.5 L682.9 585.0 L681.4 588.8 L680.0 592.5 L676.2 593.7 L672.5 595.0 L669.1 598.6 L665.0 601.2 L661.4 604.6 L657.5 607.5 L654.4 605.6 L651.7 603.3 L650.0 600.0 L647.3 597.7 L645.8 594.2 L642.5 592.5 L640.0 590.0 L643.8 587.3 L648.4 586.7 L652.5 585.0 L655.3 582.8 L656.6 579.1 L660.2 577.7 L662.5 575.0 L664.7 572.2 L667.0 569.5 L670.0 567.5 L672.5 565.0 L674.5 561.5 L675.7 557.7 L674.8 553.3 L677.5 550.0 L681.0 546.5 L683.8 542.5 L681.5 538.0 L681.6 532.9 L680.2 528.0 L682.7 528.0 L688.4 524.2 L689.6 520.9 L689.5 517.2 L691.5 514.2 L690.9 509.2 L686.5 507.9 L682.1 504.1 L684.5 500.1 L685.2 495.4 L685.7 491.1 L688.4 487.8 L685.9 485.1 L685.2 481.6Z"/>
<path fill="#6ec1c9" d="M591.2 384.5 L595.0 385.0 L598.7 386.8 L601.2 390.0 L604.0 386.4 L605.0 382.0 L608.8 383.9 L611.2 387.5 L615.0 390.0 L618.6 386.6 L622.5 383.8 L623.7 379.3 L625.0 375.0 L625.9 371.1 L626.9 367.3 L628.8 363.8 L635.0 366.2 L638.8 371.2 L640.8 375.4 L645.0 377.5 L646.0 382.5 L646.2 387.5 L646.0 392.8 L643.8 397.5 L646.9 400.7 L650.1 403.8 L652.6 407.6 L650.8 412.5 L653.2 416.3 L655.1 420.7 L658.6 423.0 L662.3 424.6 L666.4 425.1 L670.2 427.6 L671.4 432.6 L671.4 436.6 L669.6 440.2 L667.7 443.9 L672.7 447.7 L675.2 454.0 L675.2 460.2 L680.2 464.0 L681.5 467.8 L679.0 472.8 L682.7 476.5 L685.2 481.6 L685.9 485.1 L688.4 487.8 L685.7 491.1 L685.2 495.4 L684.5 500.1 L682.1 504.1 L686.5 507.9 L690.9 509.2 L691.5 514.2 L689.5 517.2 L689.6 520.9 L688.4 524.2 L682.7 528.0 L680.2 528.0 L681.6 532.9 L681.5 538.0 L683.8 542.5 L681.0 546.5 L677.5 550.0 L674.8 553.3 L675.7 557.7 L674.5 561.5 L672.5 565.0 L670.0 567.5 L667.0 569.5 L664.7 572.2 L662.5 575.0 L660.2 577.7 L656.6 579.1 L655.3 582.8 L652.5 585.0 L648.4 586.7 L643.8 587.3 L640.0 590.0 L638.0 587.0 L634.1 585.9 L632.5 582.5 L630.7 578.5 L630.5 574.2 L630.0 570.0 L630.0 565.8 L629.9 561.6 L628.8 557.5 L629.2 553.9 L631.0 550.7 L632.5 547.5 L631.2 542.5 L626.6 542.7 L622.5 545.0 L619.1 546.1 L615.6 546.6 L612.2 547.6 L608.4 546.6 L605.0 547.5 L601.2 546.8 L598.5 543.8 L595.0 542.5 L591.4 540.7 L587.4 541.8 L583.8 540.4 L580.0 540.0 L576.5 538.6 L572.6 537.8 L569.1 536.3 L565.6 534.9 L562.5 532.5 L559.8 529.1 L555.5 527.9 L552.5 525.0 L550.8 521.3 L548.8 517.7 L547.5 513.8 L543.8 516.3 L540.0 518.8 L536.5 517.4 L532.9 516.3 L530.0 513.8 L531.9 509.6 L532.5 505.0 L533.6 500.9 L532.1 496.5 L533.8 492.5 L536.9 488.8 L540.0 485.0 L540.7 481.1 L542.9 477.6 L543.4 473.6 L545.0 470.0 L548.9 469.5 L551.3 465.9 L555.0 465.0 L554.9 460.8 L557.5 457.5 L558.9 452.5 L560.0 447.5 L563.5 445.1 L565.0 441.2 L570.0 443.8 L573.7 441.8 L577.5 440.0 L576.9 434.8 L578.8 430.0 L581.7 428.0 L583.8 425.0 L587.4 423.2 L590.0 420.0 L590.6 415.5 L587.6 411.8 L587.5 407.5 L587.5 402.2 L585.0 397.5 L586.7 394.3 L587.2 390.6 L590.2 388.0 L591.2 384.5Z"/>
<path fill="#66afe9" d="M530.0 513.8 L532.9 516.3 L536.5 517.4 L540.0 518.8 L543.8 516.3 L547.5 513.8 L548.8 517.7 L550.8 521.3 L552.5 525.0 L555.5 527.9 L559.8 529.1 L562.5 532.5 L565.6 534.9 L569.1 536.3 L572.6 537.8 L576.5 538.6 L580.0 540.0 L583.8 540.4 L587.4 541.8 L591.4 540.7 L595.0 542.5 L598.5 543.8 L601.2 546.8 L605.0 547.5 L608.4 546.6 L612.2 547.6 L615.6 546.6 L619.1 546.1 L622.5 545.0 L626.6 542.7 L631.2 542.5 L632.5 547.5 L631.0 550.7 L629.2 553.9 L628.8 557.5 L629.9 561.6 L630.0 565.8 L630.0 570.0 L630.5 574.2 L630.7 578.5 L632.5 582.5 L634.1 585.9 L638.0 587.0 L640.0 590.0 L640.0 593.8 L640.8 597.5 L641.0 601.2 L641.2 605.0 L639.0 609.7 L638.8 615.0 L636.1 618.3 L636.2 622.5 L631.4 624.1 L627.5 627.5 L624.6 630.0 L624.1 633.9 L622.8 637.4 L620.0 640.0 L616.8 643.1 L616.2 647.5 L612.6 645.4 L608.9 643.4 L606.2 640.0 L602.4 637.4 L600.7 633.1 L597.5 630.0 L596.8 625.5 L595.0 621.2 L592.2 618.4 L590.0 615.0 L585.4 615.4 L581.2 617.5 L583.8 612.5 L581.8 609.4 L580.0 606.2 L578.5 609.9 L576.1 613.0 L574.2 616.5 L572.5 620.0 L571.7 624.3 L568.4 627.3 L567.2 631.4 L565.0 635.0 L561.1 633.3 L557.8 630.7 L555.0 627.5 L551.7 630.6 L547.5 632.5 L544.3 635.2 L541.1 637.9 L537.5 640.0 L534.2 638.4 L530.9 637.0 L527.9 634.9 L526.1 631.1 L522.5 630.0 L525.0 625.0 L522.4 622.6 L520.1 619.9 L517.0 618.0 L515.0 615.0 L511.8 613.2 L510.8 609.2 L507.3 607.7 L505.0 605.0 L503.4 600.7 L500.0 597.5 L503.7 596.2 L508.0 596.4 L511.4 594.2 L515.0 592.5 L518.6 590.4 L520.9 586.5 L525.0 585.0 L526.3 581.7 L526.3 577.9 L530.1 575.5 L531.2 572.1 L530.1 567.9 L532.5 565.0 L534.8 561.1 L535.3 556.4 L537.5 552.5 L536.7 549.0 L535.4 545.5 L534.2 542.1 L534.3 538.3 L532.5 535.0 L532.9 531.4 L531.0 528.0 L530.2 524.5 L529.5 521.0 L530.5 517.3 L530.0 513.8Z"/>
<path fill="#70cbae" d="M640.0 590.0 L642.5 592.5 L645.8 594.2 L647.3 597.7 L650.0 600.0 L651.7 603.3 L654.4 605.6 L657.5 607.5 L661.4 604.6 L665.0 601.2 L669.1 598.6 L672.5 595.0 L676.2 593.7 L680.0 592.5 L681.4 588.8 L682.9 585.0 L686.2 582.5 L690.9 581.3 L695.0 578.8 L697.5 581.7 L701.2 582.5 L705.2 584.6 L708.1 588.5 L712.5 590.0 L715.7 592.8 L716.3 597.3 L718.5 600.7 L721.2 603.8 L719.3 607.3 L720.3 611.2 L722.1 614.9 L723.7 618.7 L725.2 622.6 L726.9 626.3 L727.7 630.3 L729.3 634.1 L728.8 639.4 L730.9 644.2 L726.8 644.7 L722.7 645.5 L723.4 649.2 L724.4 652.8 L724.3 656.5 L724.4 660.3 L723.1 664.9 L721.1 669.3 L719.0 672.6 L715.4 674.2 L714.3 677.9 L713.3 681.7 L714.2 685.6 L709.6 689.7 L709.9 694.8 L708.0 699.5 L709.8 704.3 L709.6 709.3 L707.0 712.0 L704.7 715.0 L702.9 718.5 L699.8 720.8 L694.9 723.3 L695.0 717.5 L691.1 717.0 L688.5 713.8 L685.0 712.5 L682.3 715.3 L681.0 719.2 L677.3 721.1 L674.6 723.8 L672.9 727.4 L670.0 730.0 L665.9 730.3 L662.4 732.1 L658.7 733.6 L655.0 735.0 L651.0 733.9 L647.8 731.6 L645.0 728.8 L640.9 730.0 L637.5 732.5 L635.6 736.3 L632.7 739.3 L630.0 742.5 L633.9 739.4 L636.2 735.0 L634.9 731.3 L634.1 727.6 L634.0 723.9 L635.0 720.0 L633.3 716.1 L630.2 713.2 L627.5 710.0 L625.2 706.4 L621.3 704.9 L618.3 702.3 L615.0 700.0 L613.3 696.7 L610.6 694.4 L608.5 691.5 L605.0 690.0 L605.3 685.6 L604.4 681.5 L602.5 677.5 L601.2 673.4 L599.5 669.4 L600.0 665.0 L602.1 662.1 L605.0 660.0 L608.8 657.7 L610.1 653.2 L612.4 649.7 L616.2 647.5 L616.8 643.1 L620.0 640.0 L622.8 637.4 L624.1 633.9 L624.6 630.0 L627.5 627.5 L631.4 624.1 L636.2 622.5 L636.1 618.3 L638.8 615.0 L639.0 609.7 L641.2 605.0 L641.0 601.2 L640.8 597.5 L640.0 593.8 L640.0 590.0Z"/>
<path fill="#71cca9" d="M721.2 603.8 L723.9 601.4 L726.9 599.4 L729.4 596.9 L732.5 595.0 L736.2 592.5 L740.9 591.6 L744.1 588.2 L748.5 591.7 L750.5 595.0 L753.8 597.0 L756.4 600.6 L760.0 603.2 L762.6 609.4 L767.0 613.8 L771.4 618.2 L773.2 622.2 L775.0 626.2 L776.7 629.2 L772.6 634.1 L769.9 636.5 L768.5 639.8 L764.6 641.7 L760.4 642.3 L756.3 646.4 L756.4 649.9 L755.1 653.4 L755.4 657.0 L756.5 662.1 L758.7 666.8 L754.6 670.0 L749.7 671.7 L745.6 668.4 L742.8 665.6 L742.0 661.6 L740.7 657.9 L737.4 655.4 L735.4 651.6 L731.8 648.7 L730.9 644.2 L728.8 639.4 L729.3 634.1 L727.7 630.3 L726.9 626.3 L725.2 622.6 L723.7 618.7 L722.1 614.9 L720.3 611.2 L719.3 607.3 L721.2 603.8Z"/>
<path fill="#76d1a1" d="M730.9 644.2 L731.8 648.7 L735.4 651.6 L737.4 655.4 L740.7 657.9 L742.0 661.6 L742.8 665.6 L745.6 668.4 L749.7 671.7 L754.6 670.0 L758.7 666.8 L756.5 662.1 L755.4 657.0 L755.1 653.4 L756.4 649.9 L756.3 646.4 L760.4 642.3 L766.9 642.3 L771.0 639.0 L775.1 639.0 L775.7 643.2 L774.3 647.2 L770.2 650.4 L768.5 655.4 L766.5 660.1 L766.9 665.2 L766.9 670.1 L766.2 673.8 L763.6 676.6 L764.9 680.9 L763.5 685.4 L764.4 689.7 L759.8 691.0 L755.4 693.0 L753.9 697.0 L750.5 699.5 L746.0 700.4 L743.1 704.3 L739.1 706.1 L736.6 709.5 L735.1 713.4 L734.2 717.5 L730.8 716.0 L727.6 714.3 L725.2 711.7 L724.7 707.7 L720.4 706.5 L719.5 702.8 L716.7 700.1 L716.7 696.0 L714.5 693.0 L713.5 689.3 L714.2 685.6 L713.3 681.7 L714.3 677.9 L715.4 674.2 L719.0 672.6 L721.1 669.3 L723.1 664.9 L724.4 660.3 L724.3 656.5 L724.4 652.8 L723.4 649.2 L722.7 645.5 L726.8 644.7 L730.9 644.2Z"/>
<path fill="#68b5e0" d="M565.0 635.0 L567.2 631.4 L568.4 627.3 L571.7 624.3 L572.5 620.0 L574.2 616.5 L576.1 613.0 L578.5 609.9 L580.0 606.2 L581.8 609.4 L583.8 612.5 L581.2 617.5 L585.4 615.4 L590.0 615.0 L592.2 618.4 L595.0 621.2 L596.8 625.5 L597.5 630.0 L600.7 633.1 L602.4 637.4 L606.2 640.0 L608.9 643.4 L612.6 645.4 L616.2 647.5 L612.4 649.7 L610.1 653.2 L608.8 657.7 L605.0 660.0 L602.1 662.1 L600.0 665.0 L599.5 669.4 L601.2 673.4 L602.5 677.5 L604.4 681.5 L605.3 685.6 L605.0 690.0 L608.5 691.5 L610.6 694.4 L613.3 696.7 L615.0 700.0 L618.3 702.3 L621.3 704.9 L625.2 706.4 L627.5 710.0 L630.2 713.2 L633.3 716.1 L635.0 720.0 L634.0 723.9 L634.1 727.6 L634.9 731.3 L636.2 735.0 L633.9 739.4 L630.0 742.5 L623.8 742.5 L621.2 736.2 L618.1 733.2 L615.0 730.0 L611.3 732.7 L606.3 732.3 L602.5 735.0 L598.9 736.2 L595.8 738.3 L592.5 740.0 L595.2 743.2 L598.6 745.8 L600.0 750.0 L595.0 752.5 L591.3 754.4 L586.9 755.1 L583.6 757.8 L580.0 760.0 L576.2 760.0 L573.6 756.8 L570.0 756.2 L567.5 759.2 L564.5 761.7 L562.5 765.0 L558.3 765.5 L554.1 766.3 L550.0 767.5 L545.4 768.0 L541.2 770.0 L538.3 766.3 L537.1 762.0 L536.2 757.5 L535.3 752.8 L535.8 748.2 L537.5 743.8 L536.0 740.4 L535.2 736.8 L532.4 733.9 L532.5 730.0 L530.2 726.5 L529.3 722.2 L526.4 719.0 L525.0 715.0 L523.2 711.4 L523.2 707.6 L522.9 703.8 L522.5 700.0 L521.9 696.0 L523.0 692.4 L523.3 688.6 L525.0 685.0 L525.1 680.9 L527.1 677.4 L528.5 673.7 L530.0 670.0 L532.9 667.9 L534.1 664.1 L537.1 662.1 L540.0 660.0 L542.6 657.6 L545.8 655.8 L547.6 652.6 L549.4 649.4 L553.5 648.5 L555.0 645.0 L557.5 642.5 L561.0 641.0 L563.0 638.0 L565.0 635.0Z"/>
<path fill="#72cbae" d="M500.0 597.5 L503.4 600.7 L505.0 605.0 L507.3 607.7 L510.8 609.2 L511.8 613.2 L515.0 615.0 L517.0 618.0 L520.1 619.9 L522.4 622.6 L525.0 625.0 L522.5 630.0 L526.1 631.1 L527.9 634.9 L530.9 637.0 L534.2 638.4 L537.5 640.0 L541.1 637.9 L544.3 635.2 L547.5 632.5 L551.7 630.6 L555.0 627.5 L557.8 630.7 L561.1 633.3 L565.0 635.0 L563.0 638.0 L561.0 641.0 L557.5 642.5 L555.0 645.0 L553.5 648.5 L549.4 649.4 L547.6 652.6 L545.8 655.8 L542.6 657.6 L540.0 660.0 L537.1 662.1 L534.1 664.1 L532.9 667.9 L530.0 670.0 L528.5 673.7 L527.1 677.4 L525.1 680.9 L525.0 685.0 L523.3 688.6 L523.0 692.4 L521.9 696.0 L522.5 700.0 L522.9 703.8 L523.2 707.6 L523.2 711.4 L525.0 715.0 L526.4 719.0 L529.3 722.2 L530.2 726.5 L532.5 730.0 L532.4 733.9 L535.2 736.8 L536.0 740.4 L537.5 743.8 L535.8 748.2 L535.3 752.8 L536.2 757.5 L537.1 762.0 L538.3 766.3 L541.2 770.0 L537.3 771.1 L533.2 772.2 L530.0 775.0 L526.0 776.6 L523.4 780.2 L520.0 782.5 L522.5 776.2 L517.5 775.0 L513.6 777.0 L509.0 775.9 L505.0 777.5 L500.5 777.9 L497.0 780.9 L493.1 783.0 L488.8 783.8 L484.5 786.4 L480.0 788.8 L474.9 788.4 L470.0 790.0 L466.5 791.5 L465.7 795.7 L463.4 798.4 L460.0 800.0 L459.1 804.4 L455.0 807.0 L453.8 811.2 L453.5 806.8 L452.5 802.5 L447.5 800.0 L446.0 795.9 L442.5 793.3 L440.0 790.0 L440.0 786.4 L439.6 782.9 L437.1 779.7 L436.6 776.2 L437.5 772.5 L435.3 769.6 L433.7 766.3 L432.9 762.5 L430.0 760.0 L428.5 756.4 L428.8 752.5 L427.4 748.0 L423.8 744.6 L422.5 740.0 L424.8 736.1 L425.2 731.9 L425.0 727.5 L424.7 722.3 L422.5 717.5 L423.4 712.7 L426.2 708.8 L428.8 705.0 L428.9 701.1 L426.0 697.7 L427.8 693.6 L426.2 690.0 L426.4 685.4 L424.7 681.4 L422.5 677.5 L426.6 675.6 L430.0 672.5 L433.2 675.9 L437.5 677.5 L441.5 677.9 L445.0 680.0 L448.5 678.7 L451.9 677.0 L455.0 675.0 L455.9 669.9 L457.5 665.0 L461.4 663.8 L465.2 662.2 L468.8 660.0 L465.9 656.5 L463.8 652.5 L461.4 649.1 L461.9 645.0 L460.2 641.4 L460.0 637.5 L465.0 635.0 L465.9 631.6 L464.9 627.8 L465.7 624.4 L466.2 620.9 L467.5 617.5 L472.8 617.3 L477.5 615.0 L482.5 613.8 L487.5 612.5 L492.5 610.0 L494.1 606.7 L495.8 603.5 L499.3 601.3 L500.0 597.5Z"/>
<path fill="#71cbae" d="M426.2 708.8 L422.6 709.6 L418.9 709.9 L415.5 711.4 L412.4 713.9 L408.3 713.2 L405.0 715.0 L399.8 714.3 L395.0 716.2 L390.4 717.0 L385.7 717.3 L381.2 718.8 L378.8 725.0 L379.6 728.7 L379.3 732.3 L376.4 735.5 L376.1 739.0 L377.2 742.8 L376.2 746.2 L372.3 747.5 L368.6 749.2 L365.0 751.2 L361.2 747.5 L359.3 751.7 L359.5 756.2 L361.2 760.2 L361.7 764.2 L362.1 768.3 L361.2 772.5 L364.8 774.5 L367.6 777.7 L371.2 779.7 L375.0 781.2 L375.0 786.2 L371.4 787.2 L367.8 787.9 L364.4 789.1 L361.2 791.2 L360.9 795.0 L359.9 798.7 L360.5 802.5 L360.5 806.3 L360.0 810.0 L358.8 814.3 L355.5 817.4 L352.5 820.7 L351.2 825.0 L349.9 828.9 L349.6 832.9 L348.9 836.9 L349.2 840.9 L349.5 845.0 L350.6 848.9 L349.6 853.2 L351.5 857.0 L350.6 861.2 L352.5 865.0 L351.8 868.8 L352.8 872.4 L353.4 876.0 L355.0 879.4 L357.0 882.7 L355.7 886.7 L357.5 890.0 L358.2 893.8 L359.7 897.2 L362.5 900.0 L364.4 903.5 L366.4 907.0 L365.6 911.5 L367.5 915.0 L368.3 919.3 L369.3 923.5 L371.2 927.5 L373.5 931.4 L373.7 936.2 L376.2 940.0 L377.7 944.5 L376.9 949.2 L377.5 953.8 L381.9 953.4 L385.9 951.5 L390.0 950.0 L393.9 949.5 L397.3 952.2 L401.2 952.4 L405.0 952.5 L409.0 951.9 L412.4 949.8 L416.1 948.3 L420.0 947.5 L423.7 946.5 L426.3 943.4 L430.0 942.5 L432.4 939.3 L433.9 935.4 L436.5 932.3 L440.0 930.0 L442.5 926.2 L442.1 921.3 L444.5 917.5 L443.1 913.2 L440.0 910.0 L439.7 905.8 L438.1 902.0 L435.9 898.3 L437.5 893.6 L435.0 890.0 L428.8 887.5 L427.9 883.8 L429.7 880.0 L428.0 876.2 L428.8 872.5 L428.1 868.2 L425.1 865.1 L421.2 864.7 L417.4 864.6 L413.6 863.5 L410.0 859.7 L407.1 855.3 L405.4 851.3 L405.5 847.1 L407.9 844.2 L408.7 840.5 L411.8 837.2 L413.3 832.8 L416.9 829.9 L420.9 829.4 L424.5 827.5 L428.4 826.6 L433.7 826.7 L438.2 829.4 L443.1 829.9 L445.6 826.7 L448.7 824.1 L451.3 820.9 L452.9 816.5 L453.7 811.9 L453.8 811.2 L453.5 806.8 L452.5 802.5 L447.5 800.0 L446.0 795.9 L442.5 793.3 L440.0 790.0 L440.0 786.4 L439.6 782.9 L437.1 779.7 L436.6 776.2 L437.5 772.5 L435.3 769.6 L433.7 766.3 L432.9 762.5 L430.0 760.0 L428.5 756.4 L428.8 752.5 L427.4 748.0 L423.8 744.6 L422.5 740.0 L424.8 736.1 L425.2 731.9 L425.0 727.5 L424.7 722.3 L422.5 717.5 L423.4 712.7 L426.2 708.8Z"/>
<path fill="#6dc7bf" d="M1125.0 497.5 L1130.0 493.8 L1136.2 496.2 L1140.0 491.2 L1144.5 493.8 L1143.8 502.5 L1137.5 501.2 L1130.0 500.0Z"/>
<path fill="#71cbae" d="M407.1 849.5 L412.0 842.2 L418.5 837.3 L429.2 831.5 L443.1 832.7 L445.1 840.5 L442.8 853.6 L438.2 847.9 L425.1 843.8 L412.0 849.5Z"/>
<path fill="#71cbae" d="M444.7 852.8 L449.6 849.5 L454.5 852.0 L453.2 860.2 L446.4 862.1Z"/>
<path fill="#66afe9" d="M644.5 605.0 L650.0 601.2 L653.0 608.8 L652.0 616.2 L646.2 615.0Z"/>
<path fill="#70cbae" d="M675.0 740.0 L685.0 733.8 L691.2 735.0 L688.0 742.5 L683.8 750.0 L685.0 757.5 L681.2 762.5 L677.0 758.0 L678.8 748.0Z"/>
<path fill="#70cbae" d="M655.0 757.5 L659.5 748.0 L667.5 741.2 L671.5 743.8 L665.5 750.5 L662.5 758.0Z"/>
<path fill="#70cbae" d="M643.8 750.0 L645.5 745.5 L647.5 749.0Z"/>
<path fill="#70cbae" d="M689.0 757.0 L692.5 755.0 L695.5 758.0 L692.0 759.5Z"/>
<path fill="#70cbae" d="M704.5 721.2 L707.5 717.0 L710.5 720.5 L708.0 723.0Z"/>
<path fill="#70cbae" d="M718.8 722.5 L722.5 718.0 L725.5 722.0 L722.0 724.5Z"/>
<path fill="#76d1a1" d="M705.5 719.2 L708.0 716.7 L710.5 718.3 L709.3 721.6 L706.4 721.6Z"/>
<path fill="#76d1a1" d="M718.6 724.1 L720.3 719.2 L726.0 718.3 L725.2 721.6Z"/>
<path fill="#76d1a1" d="M717.0 715.1 L719.5 711.0 L721.9 709.3 L720.3 714.3Z"/>
<path fill="#76d1a1" d="M778.4 697.9 L780.8 696.3 L783.6 698.7 L781.3 700.3Z"/>
<path fill="#76d1a1" d="M782.9 702.8 L786.2 700.3 L788.2 703.1 L785.7 706.1Z"/>
<path fill="#76d1a1" d="M776.7 708.0 L779.2 705.7 L783.6 708.0 L782.9 711.3 L779.7 711.0Z"/>
<path fill="#76d1a1" d="M789.0 677.4 L790.6 676.6 L793.9 681.5 L792.3 684.0 L790.1 681.5Z"/>
<path fill="#76d1a1" d="M813.5 686.8 L815.2 685.1 L817.3 687.3 L815.7 688.9Z"/>
<path fill="#76d1a1" d="M823.8 702.8 L830.7 699.5 L838.1 696.3 L845.1 691.7 L843.8 694.3 L837.3 698.7 L830.7 702.0 L825.0 704.8Z"/>
<path fill="#76d1a1" d="M811.4 721.1 L814.7 715.9 L817.9 715.1 L816.0 718.3Z"/>
<path fill="#76d1a1" d="M690.0 733.1 L692.0 733.9 L691.6 736.8 L690.0 737.2Z"/>
<path fill="#76d1a1" d="M690.0 756.0 L693.6 755.2 L694.3 757.6 L690.0 758.8Z"/>
<path fill="#eedd85" d="M788.2 642.3 L790.1 640.6 L792.7 643.6 L791.1 644.9Z"/>
<path fill="#66b0e8" d="M1017.0 826.0 L1022.0 824.5 L1028.0 828.0 L1030.0 834.0 L1029.0 838.0 L1025.0 839.5 L1019.0 835.0Z"/>
<path fill="#66b0e8" d="M1015.0 844.0 L1018.0 842.0 L1022.0 847.0 L1023.0 853.0 L1020.0 854.0 L1016.0 851.0Z"/>
<path fill="#66b0e8" d="M1104.0 874.0 L1112.0 873.0 L1119.0 877.0 L1122.0 886.0 L1120.0 896.0 L1112.0 902.0 L1103.0 901.0 L1104.0 897.0 L1111.0 896.0 L1116.0 889.0 L1115.0 880.0 L1110.0 877.0 L1104.0 877.5Z"/>
<path fill="none" d="M437.5 772.5 L445.0 770.0 L460.0 770.0 L466.2 752.5 L470.0 752.5 L480.0 780.0 L488.8 783.8"/>
</g>
<g font-family="Liberation Sans,sans-serif" font-size="13.5" fill="#000" text-anchor="middle">
<text x="787.5" y="305">韶关市</text>
<text x="691.5" y="377.5">清远市</text>
<text x="912.5" y="415">河源市</text>
<text x="1031.5" y="393">梅州市</text>
<text x="1106.5" y="452.5">潮州市</text>
<text x="1035" y="516">揭阳市</text>
<text x="1084" y="517">汕头市</text>
<text x="620" y="487.5">肇庆市</text>
<text x="761.5" y="516">广州市</text>
<text x="864" y="530">惠州市</text>
<text x="973.5" y="562.5">汕尾市</text>
<text x="699" y="562.5">佛山市</text>
<text x="798" y="572.5">东莞市</text>
<text x="577.5" y="590">云浮市</text>
<text x="825" y="613">深圳市</text>
<text x="746.5" y="631">中山市</text>
<text x="670" y="664">江门市</text>
<text x="740" y="682.5">珠海市</text>
<text x="487.5" y="703.5">茂名市</text>
<text x="575" y="701">阳江市</text>
<text x="397.5" y="840">湛江市</text>
</g></svg>
<!-- title -->
<div class="t" style="left:131px;top:127px;font-size:17.5px;letter-spacing:-0.45px;font-weight:bold;color:#000">今年上半年GDP（亿元）</div><div class="t" style="left:320px;top:127px;font-size:17.5px;letter-spacing:0.2px;font-weight:bold;color:#000">-copy(1)</div>
<!-- blue toolbar -->
<div class="a" style="left:115px;top:109px;width:33px;height:180px;background:#3370ff;border-radius:3px"></div>
<svg class="a" style="left:115px;top:109px" width="33" height="180" viewBox="0 0 33 180">
  <path d="M15 7.5 H6 V28 H26.5 V19" fill="none" stroke="#fff" stroke-width="2" stroke-linejoin="round"/>
  <path d="M12 22.5 L13 17.5 L25 5.5 L28.5 9 L16.5 21 Z" fill="none" stroke="#fff" stroke-width="1.9" stroke-linejoin="round"/>
  <path d="M9 45 H6.5 V65 H9 M24 45 H26.5 V65 H24" fill="none" stroke="#fff" stroke-width="2"/>
  <g fill="#fff"><rect x="10.5" y="47.5" width="3" height="3"/><rect x="15" y="47.5" width="3" height="3"/><rect x="19.5" y="47.5" width="3" height="3"/><rect x="10.5" y="53.5" width="3" height="3"/><rect x="15" y="53.5" width="3" height="3"/><rect x="19.5" y="53.5" width="3" height="3"/><rect x="10.5" y="59.5" width="3" height="3"/><rect x="15" y="59.5" width="3" height="3"/><rect x="19.5" y="59.5" width="3" height="3"/></g>
  <path d="M20 82 H25.5 V87.5 M25.5 82 L19.5 88 M12.5 98 H7 V92.5 M7 98 L13 92" fill="none" stroke="#fff" stroke-width="2" stroke-linecap="round" stroke-linejoin="round"/>
  <path d="M18 134 H7.5 V116 H24.5 V125" fill="none" stroke="#fff" stroke-width="1.9" stroke-linejoin="round"/>
  <path d="M11 121 H21 M11 126 H15" stroke="#fff" stroke-width="1.8"/>
  <circle cx="19" cy="130" r="3.2" fill="none" stroke="#fff" stroke-width="1.8"/><path d="M21.5 132.5 L24.5 135.5" stroke="#fff" stroke-width="1.9"/>
  <g transform="translate(17,161)"><path d="M-2.2 -10 H2.2 L3 -7 L5.6 -5.6 L8.6 -6.6 L10.8 -2.8 L8.6 -0.6 V0.6 L10.8 2.8 L8.6 6.6 L5.6 5.6 L3 7 L2.2 10 H-2.2 L-3 7 L-5.6 5.6 L-8.6 6.6 L-10.8 2.8 L-8.6 0.6 V-0.6 L-10.8 -2.8 L-8.6 -6.6 L-5.6 -5.6 L-3 -7 Z" fill="none" stroke="#fff" stroke-width="1.9" stroke-linejoin="round"/><circle r="3.6" fill="none" stroke="#fff" stroke-width="1.9"/></g>
</svg>
<!-- handles -->
<svg class="a" style="left:100px;top:94px" width="1306" height="1006" viewBox="100 94 1306 1006">
 <g fill="#fff" stroke="#69b4fa" stroke-width="1.3">
  <circle cx="115.5" cy="108.5" r="5.5"/><circle cx="749.5" cy="108.5" r="5.5"/><circle cx="1384" cy="108.5" r="5.5"/>
  <circle cx="115.5" cy="577.5" r="5.5"/><circle cx="1384" cy="577.5" r="5.5"/>
  <circle cx="115.5" cy="1048" r="5.5"/><circle cx="749.5" cy="1048" r="5.5"/><circle cx="1384" cy="1048" r="5.5"/>
 </g>
</svg>
<!-- zoom controls -->
<div class="a" style="left:140px;top:847px;width:48px;height:156px;background:#fff;border-radius:8px;box-shadow:0 0 12px rgba(0,0,0,0.06)"></div>
<div class="cir" style="left:143px;top:850px;width:42px;height:42px;border:1px solid #d9dce6"></div>
<div class="cir" style="left:143px;top:904px;width:42px;height:42px;border:1px solid #d9dce6"></div>
<div class="cir" style="left:143px;top:958px;width:42px;height:42px;border:1px solid #d9dce6"></div>
<svg class="a" style="left:154px;top:861px" width="20" height="20"><path d="M10 2.5 V17.5 M2.5 10 H17.5" stroke="#555" stroke-width="1.3"/></svg>
<svg class="a" style="left:154px;top:915px" width="20" height="20"><path d="M15.3 8.5 A5.5 5.5 0 0 0 5 7.5 M4.7 11.5 A5.5 5.5 0 0 0 15 12.5" fill="none" stroke="#555" stroke-width="1.3"/><path d="M5 4.5 V7.8 H8.3 M15 15.5 V12.2 H11.7" fill="none" stroke="#555" stroke-width="1.3"/></svg>
<svg class="a" style="left:154px;top:969px" width="20" height="20"><path d="M2.5 10 H17.5" stroke="#555" stroke-width="1.3"/></svg>
<!-- breadcrumb -->
<div class="t" style="left:127px;top:1017px;font-size:18px;color:#5f6368">全部</div>
<svg class="a" style="left:166px;top:1016px" width="12" height="20"><path d="M3 3.5 L8.5 10 L3 16.5" fill="none" stroke="#bbb" stroke-width="1.3"/></svg>
<div class="t" style="left:180px;top:1017px;font-size:18px;color:#5f6368">广东省</div>
<!-- legend -->
<div class="t" style="left:1336px;top:762px;font-size:19px;color:#333">High</div>
<div class="t" style="left:1267px;top:786px;font-size:19px;color:#333">14324</div>
<div class="t" style="left:1288px;top:996px;font-size:19px;color:#333">489</div>
<div class="t" style="left:1339px;top:1020px;font-size:19px;color:#333">Low</div>
<div class="a" style="left:1341px;top:803px;width:30px;height:199px;background:linear-gradient(to bottom,#efd88a 0%,#eeb46c 12%,#a9a2b4 19%,#6b8fe0 25%,#7a88a8 35%,#6fa8b0 43%,#69cdc0 50%,#c0a39a 57%,#f49086 63%,#f5bb7a 71%,#e9cb80 75%,#9dd08a 83%,#70d490 89%,#5cb8d8 100%)"></div>
<div class="a" style="left:1338px;top:793px;width:36px;height:9px;background:#f0d88a;border-radius:5px"></div>
<div class="a" style="left:1338px;top:1003px;width:36px;height:9px;background:#65b4e6;border-radius:5px"></div>

<!-- RIGHT PANEL -->
<div class="a" style="left:1405px;top:94px;width:535px;height:1006px;background:#f5f6f8;border-left:1px solid #e4e5e7"></div>
<div class="a" style="left:1407px;top:94px;width:533px;height:60px;background:#fff;border-bottom:1px solid #e4e5e7"></div>
<div class="cir" style="left:1413px;top:102px;width:42px;height:42px;border:1px solid #dee0e3;background:#fff"></div>
<svg class="a" style="left:1424px;top:113px" width="20" height="20"><path d="M4.5 4.5 L9.5 10 L4.5 15.5 M10 4.5 L15 10 L10 15.5" fill="none" stroke="#646a73" stroke-width="1.3"/></svg>
<svg class="a" style="left:1461px;top:115px" width="17" height="17"><circle cx="8.5" cy="8.5" r="8" fill="#646a73"/><rect x="7.5" y="3.8" width="2" height="6.5" rx="0.5" fill="#fff"/><rect x="7.5" y="11.5" width="2" height="2" fill="#fff"/></svg>
<div class="t" style="left:1482px;top:114px;font-size:18px;color:#1f2329">今年上半年GDP（亿...</div>
<div class="a" style="left:1837px;top:103px;width:84px;height:41px;border:1px solid #dee0e3;border-radius:21px;background:#fff"></div>
<div class="t" style="left:1861px;top:114px;font-size:18px;color:#1f2329">重置</div>
<!-- tabs -->
<div class="a" style="left:1407px;top:213px;width:533px;height:2px;background:#dee0e3"></div>
<div class="a" style="left:1437px;top:213px;width:114px;height:3px;background:#3370ff"></div>
<div class="t" style="left:1476px;top:177px;font-size:18px;color:#3370ff">数据</div>
<div class="t" style="left:1650px;top:177px;font-size:18px;color:#1f2329">样式</div>
<div class="t" style="left:1825px;top:177px;font-size:18px;color:#1f2329">高级</div>
<!-- columns -->
<div class="a" style="left:1646px;top:215px;width:1px;height:885px;background:#e4e5e7"></div>
<div class="a" style="left:1416px;top:224px;width:156px;height:40px;border:1px solid #dee0e3;border-radius:6px;background:#fff"></div>
<svg class="a" style="left:1432px;top:234px" width="20" height="20"><circle cx="9.5" cy="9.5" r="6.5" fill="none" stroke="#bbbfc4" stroke-width="1.4"/><path d="M14 14 L16.5 16.5" stroke="#bbbfc4" stroke-width="1.4"/></svg>
<div class="t" style="left:1462px;top:235px;font-size:18px;color:#bbbfc4">搜索</div>
<svg class="a" style="left:1584px;top:235px" width="20" height="20" viewBox="0 0 20 20"><path d="M15.47 8.78 L17.54 9.01 L17.54 10.99 L15.47 11.22 L14.73 13.00 L16.03 14.63 L14.63 16.03 L13.00 14.73 L11.22 15.47 L10.99 17.54 L9.01 17.54 L8.78 15.47 L7.00 14.73 L5.37 16.03 L3.97 14.63 L5.27 13.00 L4.53 11.22 L2.46 10.99 L2.46 9.01 L4.53 8.78 L5.27 7.00 L3.97 5.37 L5.37 3.97 L7.00 5.27 L8.78 4.53 L9.01 2.46 L10.99 2.46 L11.22 4.53 L13.00 5.27 L14.63 3.97 L16.03 5.37 L14.73 7.00Z" fill="none" stroke="#3370ff" stroke-width="1.5" stroke-linejoin="round"/><circle cx="10" cy="10" r="2.6" fill="none" stroke="#3370ff" stroke-width="1.5"/></svg>
<svg class="a" style="left:1616px;top:235px" width="20" height="20"><path d="M15.5 8.5 A6 6 0 0 0 4.3 7.3 M4.5 11.5 A6 6 0 0 0 15.7 12.7" fill="none" stroke="#3370ff" stroke-width="1.5"/><path d="M4 4 V7.8 H7.8 M16 16 V12.2 H12.2" fill="none" stroke="#3370ff" stroke-width="1.5"/></svg>
<div class="a" style="left:1407px;top:274px;width:239px;height:1px;background:#e4e5e7"></div>
<div class="t" style="left:1416px;top:287px;font-size:18px;color:#1f2329">维度</div>
<div class="a" style="left:1419px;top:319px;width:215px;height:35px;border:1px solid #ebedf0;background:#fff"></div>
<div class="a" style="left:1419px;top:358px;width:215px;height:35px;border:1px solid #ebedf0;background:#fff"></div>
<div class="t" style="left:1439px;top:326px;font-size:18px;color:#3370ff">T</div>
<div class="t" style="left:1458px;top:326px;font-size:18px;color:#3d4147">province</div>
<div class="t" style="left:1439px;top:365px;font-size:18px;color:#3370ff">T</div>
<div class="t" style="left:1458px;top:365px;font-size:18px;color:#3d4147">city</div>
<div class="a" style="left:1407px;top:677px;width:239px;height:1px;background:#e4e5e7"></div>
<div class="a" style="left:1407px;top:686px;width:239px;height:1px;background:#e4e5e7"></div>
<div class="cir" style="left:1516px;top:679px;width:5px;height:5px;background:#bbbfc4"></div>
<div class="cir" style="left:1523px;top:679px;width:5px;height:5px;background:#bbbfc4"></div>
<div class="cir" style="left:1530px;top:679px;width:5px;height:5px;background:#bbbfc4"></div>
<div class="t" style="left:1416px;top:695px;font-size:18px;color:#1f2329">指标</div>
<div class="a" style="left:1419px;top:727px;width:215px;height:35px;border:1px solid #ebedf0;background:#fff"></div>
<div class="a" style="left:1419px;top:766px;width:215px;height:35px;border:1px solid #ebedf0;background:#fff"></div>
<div class="t" style="left:1437px;top:731px;font-size:22px;color:#2fa894">#</div>
<div class="t" style="left:1457px;top:734px;font-size:18px;color:#3d4147">gdp</div>
<div class="t" style="left:1437px;top:770px;font-size:22px;color:#2fa894">#</div>
<div class="t" style="left:1457px;top:773px;font-size:18px;color:#3d4147">记录数*</div>
<!-- right column -->
<div class="t" style="left:1657px;top:225px;font-size:18px;color:#1f2329">图表类型</div>
<svg class="a" style="left:1665px;top:252px" width="45" height="38" viewBox="0 0 45 38"><path d="M6.22 14.16 L8.98 13.12 L10.36 11.40 L12.43 10.36 L14.50 9.15 L15.88 11.40 L16.23 13.12 L18.65 14.85 L22.10 15.54 L25.21 14.50 L26.24 13.12 L28.66 11.40 L27.28 10.36 L29.01 7.25 L31.77 7.08 L32.80 8.63 L35.91 9.15 L35.22 13.12 L33.15 14.85 L31.08 15.88 L29.35 17.61 L30.73 18.65 L30.04 19.68 L31.77 21.06 L32.11 23.48 L31.08 26.24 L29.01 27.97 L26.24 30.04 L25.55 31.42 L24.17 31.60 L23.83 30.04 L21.41 29.35 L19.34 29.70 L17.96 27.28 L16.92 25.90 L14.85 25.55 L10.36 23.48 L7.25 20.72 L6.91 18.65 L6.22 16.57Z" fill="#000" stroke="#000" stroke-width="0.8" stroke-linejoin="round"/><circle cx="32" cy="27.5" r="0.8" fill="#555"/></svg>
<div class="a" style="left:1805px;top:257px;width:116px;height:38px;border:1px solid #dee0e3;border-radius:5px;background:#fff"></div>
<div class="t" style="left:1815px;top:267px;font-size:18px;color:#646a73">更改类型</div>
<svg class="a" style="left:1893px;top:270px" width="14" height="12"><path d="M1.5 2.5 H12.5 L7 9 Z" fill="#646a73"/></svg>
<div class="a" style="left:1647px;top:304px;width:283px;height:1px;background:#e4e5e7"></div>
<div class="t" style="left:1657px;top:317px;font-size:18px;color:#1f2329">结果展示</div>
<div class="cir" style="left:1664px;top:361px;width:20px;height:20px;border:1px solid #dee0e3;background:#fff"></div>
<div class="t" style="left:1691px;top:362px;font-size:18px;color:#646a73">全部</div>
<div class="cir" style="left:1743px;top:361px;width:20px;height:20px;background:#3370ff"></div>
<div class="cir" style="left:1750px;top:368px;width:6px;height:6px;background:#fff"></div>
<div class="a" style="left:1770px;top:350px;width:74px;height:40px;border:1px solid #dee0e3;border-radius:5px;background:#fff"></div>
<div class="t" style="left:1777px;top:361px;font-size:18px;color:#646a73">1000</div>
<div class="t" style="left:1657px;top:410px;font-size:18px;color:#1f2329">地图范围</div>
<div class="a" style="left:1657px;top:436px;width:264px;height:46px;border:1px solid #dee0e3;border-radius:6px;background:#fff"></div>
<div class="t" style="left:1673px;top:452px;font-size:18px;color:#1f2329">中华人民共和国</div>
<svg class="a" style="left:1859px;top:452px" width="16" height="16"><path d="M3 3 L13 13 M13 3 L3 13" stroke="#a8abb2" stroke-width="1.6"/></svg>
<svg class="a" style="left:1888px;top:452px" width="18" height="14"><path d="M2 3 H16 L9 9.5 Z" fill="#a8abb2"/></svg>
<div class="t" style="left:1657px;top:494px;font-size:18px;color:#1f2329">地区 / 维度</div>
<div class="a" style="left:1657px;top:519px;width:264px;height:48px;border:1px solid #dee0e3;border-radius:6px;background:#fff"></div>
<div class="a" style="left:1662px;top:525px;width:252px;height:36px;border:1px solid #c7d7fb;border-radius:6px;background:#ebf1ff"></div>
<div class="t" style="left:1676px;top:534px;font-size:18px;color:#5e84d9">T</div>
<div class="t" style="left:1695px;top:534px;font-size:18px;color:#3370ff">province</div>
<div class="t" style="left:1657px;top:587px;font-size:18px;color:#1f2329">数据 / 指标</div>
<div class="a" style="left:1657px;top:612px;width:264px;height:48px;border:1px solid #dee0e3;border-radius:6px;background:#fff"></div>
<div class="a" style="left:1662px;top:618px;width:252px;height:36px;border:1px solid #d2efc8;border-radius:6px;background:#f0f9ec"></div>
<div class="t" style="left:1675px;top:624px;font-size:22px;color:#2fa894">#</div>
<div class="t" style="left:1695px;top:627px;font-size:18px;color:#4cb944">gdp</div>
<div class="t" style="left:1823px;top:627px;font-size:18px;color:#8f959e">求和</div>
<div class="t" style="left:1657px;top:680px;font-size:18px;color:#1f2329">过滤器</div>
<div class="a" style="left:1657px;top:706px;width:264px;height:46px;border:1px solid #dee0e3;border-radius:6px;background:#fff"></div>
<div class="t" style="left:1671px;top:719px;font-size:18px;color:#bbbfc4">拖动字段至此处</div>
<div class="t" style="left:1657px;top:772px;font-size:18px;color:#1f2329">钻取 / 维度</div>
<svg class="a" style="left:1744px;top:773px" width="17" height="17"><circle cx="8.5" cy="8.5" r="8" fill="#646a73"/><circle cx="9.2" cy="4.6" r="1.3" fill="#fff"/><path d="M9 7.5 L7.8 13" stroke="#fff" stroke-width="2.1" stroke-linecap="round"/></svg>
<div class="a" style="left:1657px;top:799px;width:264px;height:82px;border:1px solid #dee0e3;border-radius:6px;background:#fff"></div>
<div class="a" style="left:1663px;top:803px;width:251px;height:35px;border:1px solid #c7d7fb;border-radius:6px;background:#ebf1ff"></div>
<div class="a" style="left:1663px;top:842px;width:251px;height:35px;border:1px solid #c7d7fb;border-radius:6px;background:#ebf1ff"></div>
<div class="t" style="left:1676px;top:812px;font-size:18px;color:#5e84d9">T</div>
<div class="t" style="left:1695px;top:812px;font-size:18px;color:#3370ff">province</div>
<div class="t" style="left:1676px;top:851px;font-size:18px;color:#5e84d9">T</div>
<div class="t" style="left:1695px;top:851px;font-size:18px;color:#3370ff">city</div>
<svg class="a" style="left:1865px;top:534px" width="18" height="18" viewBox="0 0 18 18"><path d="M6.5 3.3 V1.8 H11.5 V3.3 M2.5 3.8 H15.5 M4 4 V16.2 H14 V4 M7.5 7 V13 M10.5 7 V13" fill="none" stroke="#8f959e" stroke-width="1.4"/></svg>
<svg class="a" style="left:1887px;top:537px" width="16" height="12" viewBox="0 0 16 12"><path d="M1.8 2.8 L8 8.8 L14.2 2.8" fill="none" stroke="#3370ff" stroke-width="1.5"/></svg>
<svg class="a" style="left:1865px;top:627px" width="18" height="18" viewBox="0 0 18 18"><path d="M6.5 3.3 V1.8 H11.5 V3.3 M2.5 3.8 H15.5 M4 4 V16.2 H14 V4 M7.5 7 V13 M10.5 7 V13" fill="none" stroke="#8f959e" stroke-width="1.4"/></svg>
<svg class="a" style="left:1887px;top:630px" width="16" height="12" viewBox="0 0 16 12"><path d="M1.8 2.8 L8 8.8 L14.2 2.8" fill="none" stroke="#67c23a" stroke-width="1.5"/></svg>
<svg class="a" style="left:1865px;top:811px" width="18" height="18" viewBox="0 0 18 18"><path d="M6.5 3.3 V1.8 H11.5 V3.3 M2.5 3.8 H15.5 M4 4 V16.2 H14 V4 M7.5 7 V13 M10.5 7 V13" fill="none" stroke="#8f959e" stroke-width="1.4"/></svg>
<svg class="a" style="left:1887px;top:814px" width="16" height="12" viewBox="0 0 16 12"><path d="M1.8 2.8 L8 8.8 L14.2 2.8" fill="none" stroke="#3370ff" stroke-width="1.5"/></svg>
<svg class="a" style="left:1865px;top:850px" width="18" height="18" viewBox="0 0 18 18"><path d="M6.5 3.3 V1.8 H11.5 V3.3 M2.5 3.8 H15.5 M4 4 V16.2 H14 V4 M7.5 7 V13 M10.5 7 V13" fill="none" stroke="#8f959e" stroke-width="1.4"/></svg>
<svg class="a" style="left:1887px;top:853px" width="16" height="12" viewBox="0 0 16 12"><path d="M1.8 2.8 L8 8.8 L14.2 2.8" fill="none" stroke="#3370ff" stroke-width="1.5"/></svg>
</div></div>
</body></html>
